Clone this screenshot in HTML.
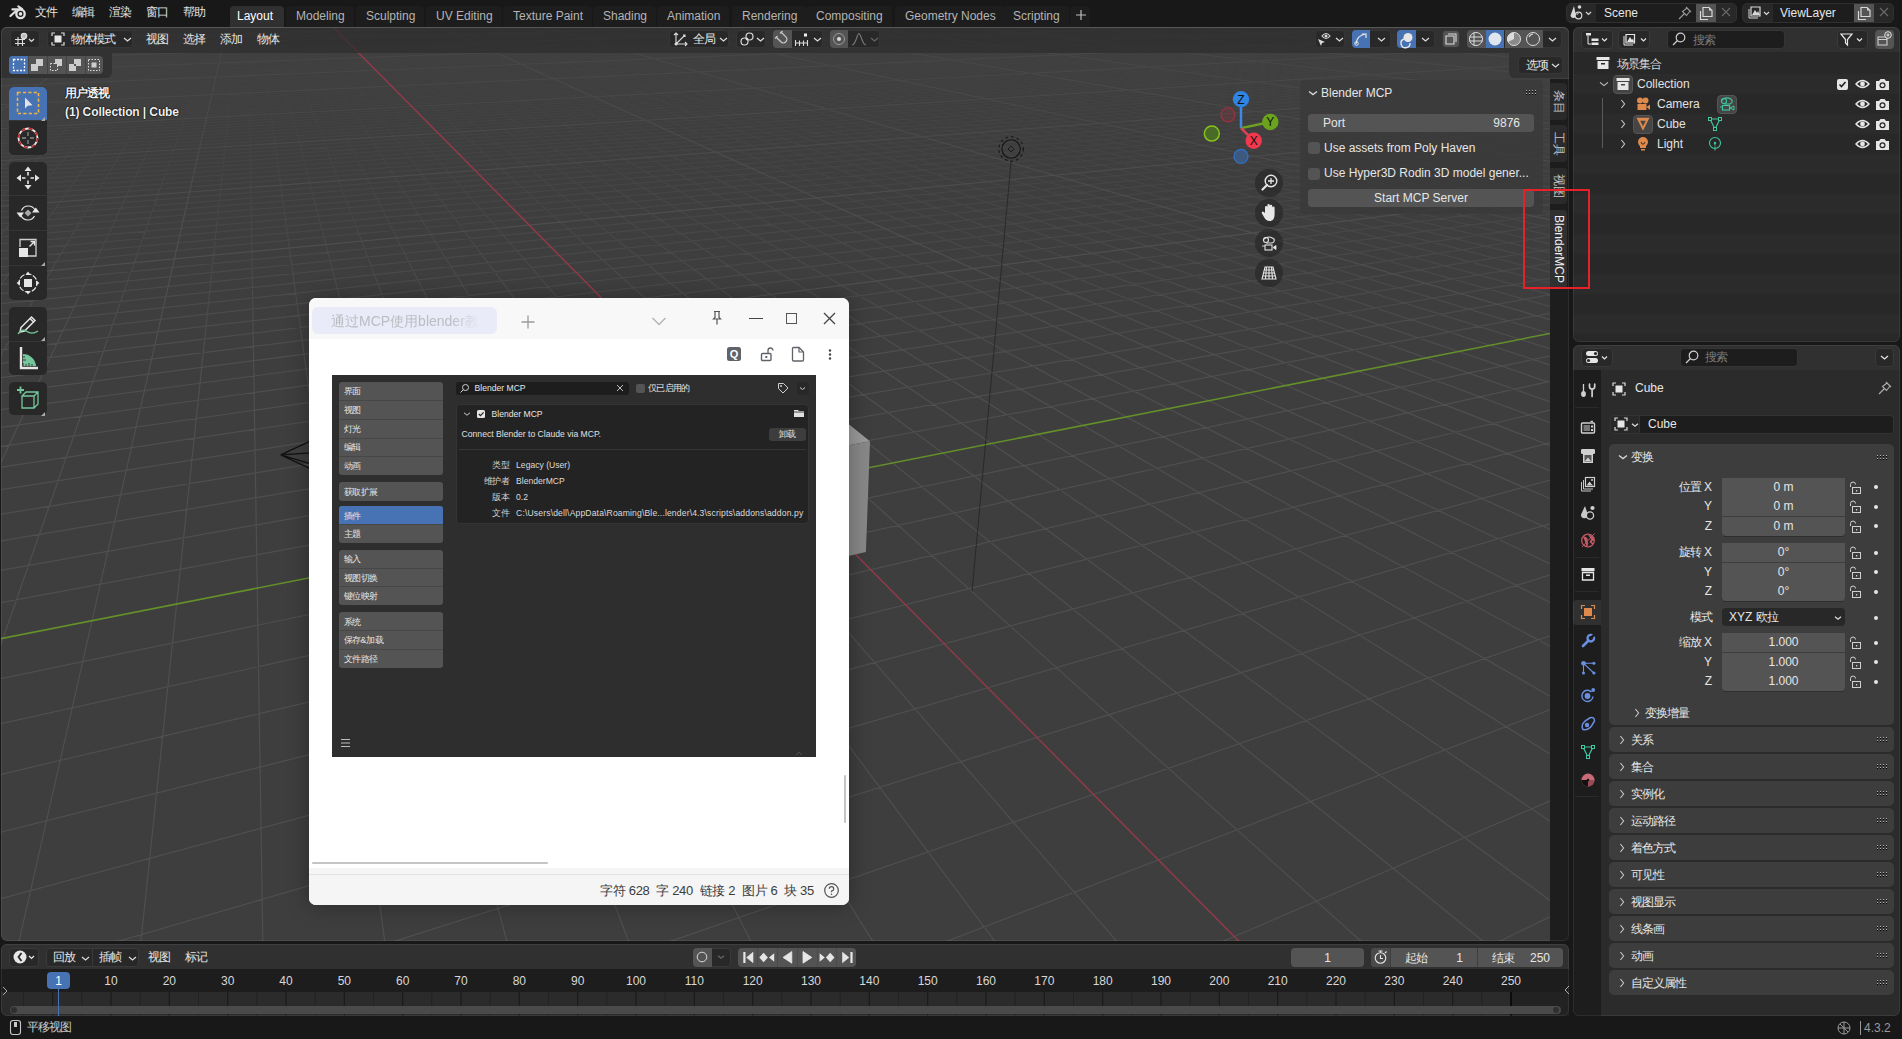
<!DOCTYPE html><html><head><meta charset="utf-8"><style>*{box-sizing:border-box}
body{margin:0;width:1902px;height:1039px;background:#181818;overflow:hidden;position:relative;font-family:"Liberation Sans",sans-serif;font-size:12px;color:#e6e6e6}
.a{position:absolute}
.t{white-space:pre}
svg{overflow:visible}
</style></head><body><svg class="a" style="left:9px;top:5px;" width="18" height="16" viewBox="0 0 18 16"><circle cx="11.5" cy="8.9" r="4.2" fill="none" stroke="#e2e2e2" stroke-width="2.3"/><circle cx="11.5" cy="8.9" r="1.8" fill="#e2e2e2"/><path d="M1.4 11L6.6 6.2M3.4 4.4L10.2 4.1M9.3 1.3L13.3 4" fill="none" stroke="#e2e2e2" stroke-width="2.1" stroke-linecap="round"/></svg><div class="a t" style="left:34.5px;top:6.34px;font-size:12px;line-height:12px;color:#e0e0e0;"><span style="letter-spacing:-1.00px">文件</span></div><div class="a t" style="left:71.5px;top:6.34px;font-size:12px;line-height:12px;color:#e0e0e0;"><span style="letter-spacing:-1.00px">编辑</span></div><div class="a t" style="left:108.5px;top:6.34px;font-size:12px;line-height:12px;color:#e0e0e0;"><span style="letter-spacing:-1.00px">渲染</span></div><div class="a t" style="left:145.5px;top:6.34px;font-size:12px;line-height:12px;color:#e0e0e0;"><span style="letter-spacing:-1.00px">窗口</span></div><div class="a t" style="left:182.5px;top:6.34px;font-size:12px;line-height:12px;color:#e0e0e0;"><span style="letter-spacing:-1.00px">帮助</span></div><div class="a" style="left:230px;top:6px;width:54px;height:21px;background:#303030;border-radius:4px 4px 0 0;"></div><div class="a" style="left:286px;top:6px;width:67.7px;height:21px;background:#1d1d1d;border-radius:4px 4px 0 0;"></div><div class="a" style="left:356px;top:6px;width:68.4px;height:21px;background:#1d1d1d;border-radius:4px 4px 0 0;"></div><div class="a" style="left:426px;top:6px;width:75.7px;height:21px;background:#1d1d1d;border-radius:4px 4px 0 0;"></div><div class="a" style="left:503px;top:6px;width:89px;height:21px;background:#1d1d1d;border-radius:4px 4px 0 0;"></div><div class="a" style="left:593px;top:6px;width:63px;height:21px;background:#1d1d1d;border-radius:4px 4px 0 0;"></div><div class="a" style="left:657px;top:6px;width:72.4px;height:21px;background:#1d1d1d;border-radius:4px 4px 0 0;"></div><div class="a" style="left:732px;top:6px;width:74.4px;height:21px;background:#1d1d1d;border-radius:4px 4px 0 0;"></div><div class="a" style="left:806px;top:6px;width:85.7px;height:21px;background:#1d1d1d;border-radius:4px 4px 0 0;"></div><div class="a" style="left:895px;top:6px;width:109.7px;height:21px;background:#1d1d1d;border-radius:4px 4px 0 0;"></div><div class="a" style="left:1003px;top:6px;width:65.7px;height:21px;background:#1d1d1d;border-radius:4px 4px 0 0;"></div><div class="a" style="left:1070px;top:6px;width:20px;height:21px;background:#1d1d1d;border-radius:4px 4px 0 0;"></div><div class="a t" style="left:237px;top:9.84px;font-size:12px;line-height:12px;color:#ffffff;">Layout</div><div class="a t" style="left:296px;top:9.84px;font-size:12px;line-height:12px;color:#b4b4b4;">Modeling</div><div class="a t" style="left:366px;top:9.84px;font-size:12px;line-height:12px;color:#b4b4b4;">Sculpting</div><div class="a t" style="left:436px;top:9.84px;font-size:12px;line-height:12px;color:#b4b4b4;">UV Editing</div><div class="a t" style="left:513px;top:9.84px;font-size:12px;line-height:12px;color:#b4b4b4;">Texture Paint</div><div class="a t" style="left:603px;top:9.84px;font-size:12px;line-height:12px;color:#b4b4b4;">Shading</div><div class="a t" style="left:667px;top:9.84px;font-size:12px;line-height:12px;color:#b4b4b4;">Animation</div><div class="a t" style="left:742px;top:9.84px;font-size:12px;line-height:12px;color:#b4b4b4;">Rendering</div><div class="a t" style="left:816px;top:9.84px;font-size:12px;line-height:12px;color:#b4b4b4;">Compositing</div><div class="a t" style="left:905px;top:9.84px;font-size:12px;line-height:12px;color:#b4b4b4;">Geometry Nodes</div><div class="a t" style="left:1013px;top:9.84px;font-size:12px;line-height:12px;color:#b4b4b4;">Scripting</div><svg class="a" style="left:1075px;top:9px;" width="12" height="12" viewBox="0 0 12 12"><path d="M6 1V11M1 6H11" stroke="#c0c0c0" stroke-width="1.2"/></svg><div class="a" style="left:1565.5px;top:3.3px;width:171px;height:19.4px;background:#282828;border-radius:5px;border:1px solid #303030;"></div><div class="a" style="left:1596.4px;top:4.3px;width:99.8px;height:17.4px;background:#1d1d1d;"></div><div class="a" style="left:1696.2px;top:4.3px;width:20px;height:17.4px;background:#545454;"></div><svg class="a" style="left:1569px;top:4px;" width="26" height="17" viewBox="0 0 26 17"><path d="M5 2L1.5 11.5A2.8 2.8 0 0 0 7 12Z" fill="#d8d8d8"/><circle cx="10.5" cy="3" r="1.8" fill="#d8d8d8"/><circle cx="9.5" cy="11.5" r="3.3" fill="#282828" stroke="#d8d8d8" stroke-width="1.2"/><path d="M8 11A1.5 1.5 0 0 1 9.5 9.5" fill="none" stroke="#d8d8d8" stroke-width="0.9"/><path d="M17 8L19.5 10.5L22 8" fill="none" stroke="#d8d8d8" stroke-width="1.2"/></svg><div class="a t" style="left:1604px;top:6.84px;font-size:12px;line-height:12px;color:#e6e6e6;">Scene</div><svg class="a" style="left:1677px;top:5px;" width="16" height="16" viewBox="0 0 16 16"><path d="M9 2L14 7M10 3L5.5 6.5L9.5 10.5L13 6M7.5 8.5L2 14" fill="none" stroke="#9a9a9a" stroke-width="1.1"/></svg><svg class="a" style="left:1698px;top:5px;" width="16" height="16" viewBox="0 0 16 16"><path d="M2.5 6V14.5H10" fill="none" stroke="#d8d8d8" stroke-width="1.2"/><path d="M5 2.5H11L14 5.5V11.5H5Z" fill="#545454" stroke="#d8d8d8" stroke-width="1.2"/><path d="M11 2.5V5.5H14Z" fill="#d8d8d8"/></svg><svg class="a" style="left:1719px;top:5px;" width="14" height="14" viewBox="0 0 14 14"><path d="M3 3L11 11M11 3L3 11" stroke="#6a6a6a" stroke-width="1.1"/></svg><div class="a" style="left:1742.4px;top:3.3px;width:151.6px;height:19.4px;background:#282828;border-radius:5px;border:1px solid #303030;"></div><div class="a" style="left:1773.3px;top:4.3px;width:80.3px;height:17.4px;background:#1d1d1d;"></div><div class="a" style="left:1853.6px;top:4.3px;width:20px;height:17.4px;background:#545454;"></div><svg class="a" style="left:1745px;top:4px;" width="28" height="17" viewBox="0 0 28 17"><path d="M4 5V14H13" fill="none" stroke="#d8d8d8" stroke-width="1"/><path d="M6 3V12H15V3Z" fill="none" stroke="#d8d8d8" stroke-width="1.2"/><path d="M7 11L10 6L12 9L13 7L15 11Z" fill="#d8d8d8"/><path d="M19 8L21.5 10.5L24 8" fill="none" stroke="#d8d8d8" stroke-width="1.2"/></svg><div class="a t" style="left:1780px;top:6.84px;font-size:12px;line-height:12px;color:#e6e6e6;">ViewLayer</div><svg class="a" style="left:1856px;top:5px;" width="16" height="16" viewBox="0 0 16 16"><path d="M2.5 6V14.5H10" fill="none" stroke="#d8d8d8" stroke-width="1.2"/><path d="M5 2.5H11L14 5.5V11.5H5Z" fill="#545454" stroke="#d8d8d8" stroke-width="1.2"/><path d="M11 2.5V5.5H14Z" fill="#d8d8d8"/></svg><svg class="a" style="left:1877px;top:5px;" width="14" height="14" viewBox="0 0 14 14"><path d="M3 3L11 11M11 3L3 11" stroke="#6a6a6a" stroke-width="1.1"/></svg><div class="a" style="left:1px;top:27px;width:1568px;height:914px;background:#3e3e3e;border-radius:6px;overflow:hidden;"><svg class="a" style="left:-1px;top:-27px" width="1570" height="945"><defs><linearGradient id="gm1" x1="0" y1="27" x2="0" y2="941" gradientUnits="userSpaceOnUse"><stop offset="0.000" stop-opacity="0.100" stop-color="#fff"/><stop offset="0.033" stop-opacity="0.135" stop-color="#fff"/><stop offset="0.066" stop-opacity="0.190" stop-color="#fff"/><stop offset="0.098" stop-opacity="0.251" stop-color="#fff"/><stop offset="0.131" stop-opacity="0.318" stop-color="#fff"/><stop offset="0.164" stop-opacity="0.389" stop-color="#fff"/><stop offset="0.197" stop-opacity="0.465" stop-color="#fff"/><stop offset="0.230" stop-opacity="0.545" stop-color="#fff"/><stop offset="0.263" stop-opacity="0.630" stop-color="#fff"/><stop offset="0.295" stop-opacity="0.718" stop-color="#fff"/><stop offset="0.328" stop-opacity="0.811" stop-color="#fff"/><stop offset="0.361" stop-opacity="0.907" stop-color="#fff"/><stop offset="0.394" stop-opacity="0.950" stop-color="#fff"/><stop offset="0.427" stop-opacity="0.950" stop-color="#fff"/><stop offset="0.460" stop-opacity="0.950" stop-color="#fff"/><stop offset="0.492" stop-opacity="0.950" stop-color="#fff"/><stop offset="0.525" stop-opacity="0.950" stop-color="#fff"/><stop offset="0.558" stop-opacity="0.950" stop-color="#fff"/><stop offset="0.591" stop-opacity="0.950" stop-color="#fff"/><stop offset="0.624" stop-opacity="0.950" stop-color="#fff"/><stop offset="0.656" stop-opacity="0.950" stop-color="#fff"/><stop offset="0.689" stop-opacity="0.950" stop-color="#fff"/><stop offset="0.722" stop-opacity="0.950" stop-color="#fff"/><stop offset="0.755" stop-opacity="0.950" stop-color="#fff"/><stop offset="0.788" stop-opacity="0.950" stop-color="#fff"/><stop offset="0.821" stop-opacity="0.950" stop-color="#fff"/><stop offset="0.853" stop-opacity="0.950" stop-color="#fff"/><stop offset="0.886" stop-opacity="0.950" stop-color="#fff"/><stop offset="0.919" stop-opacity="0.950" stop-color="#fff"/><stop offset="0.952" stop-opacity="0.950" stop-color="#fff"/><stop offset="0.985" stop-opacity="0.950" stop-color="#fff"/></linearGradient>
<linearGradient id="gm10" x1="0" y1="27" x2="0" y2="941" gradientUnits="userSpaceOnUse"><stop offset="0.000" stop-opacity="0.404" stop-color="#fff"/><stop offset="0.033" stop-opacity="0.462" stop-color="#fff"/><stop offset="0.066" stop-opacity="0.528" stop-color="#fff"/><stop offset="0.098" stop-opacity="0.602" stop-color="#fff"/><stop offset="0.131" stop-opacity="0.681" stop-color="#fff"/><stop offset="0.164" stop-opacity="0.767" stop-color="#fff"/><stop offset="0.197" stop-opacity="0.858" stop-color="#fff"/><stop offset="0.230" stop-opacity="0.950" stop-color="#fff"/><stop offset="0.263" stop-opacity="0.950" stop-color="#fff"/><stop offset="0.295" stop-opacity="0.950" stop-color="#fff"/><stop offset="0.328" stop-opacity="0.950" stop-color="#fff"/><stop offset="0.361" stop-opacity="0.950" stop-color="#fff"/><stop offset="0.394" stop-opacity="0.950" stop-color="#fff"/><stop offset="0.427" stop-opacity="0.950" stop-color="#fff"/><stop offset="0.460" stop-opacity="0.950" stop-color="#fff"/><stop offset="0.492" stop-opacity="0.950" stop-color="#fff"/><stop offset="0.525" stop-opacity="0.950" stop-color="#fff"/><stop offset="0.558" stop-opacity="0.950" stop-color="#fff"/><stop offset="0.591" stop-opacity="0.950" stop-color="#fff"/><stop offset="0.624" stop-opacity="0.950" stop-color="#fff"/><stop offset="0.656" stop-opacity="0.950" stop-color="#fff"/><stop offset="0.689" stop-opacity="0.950" stop-color="#fff"/><stop offset="0.722" stop-opacity="0.950" stop-color="#fff"/><stop offset="0.755" stop-opacity="0.950" stop-color="#fff"/><stop offset="0.788" stop-opacity="0.950" stop-color="#fff"/><stop offset="0.821" stop-opacity="0.950" stop-color="#fff"/><stop offset="0.853" stop-opacity="0.950" stop-color="#fff"/><stop offset="0.886" stop-opacity="0.950" stop-color="#fff"/><stop offset="0.919" stop-opacity="0.950" stop-color="#fff"/><stop offset="0.952" stop-opacity="0.950" stop-color="#fff"/><stop offset="0.985" stop-opacity="0.950" stop-color="#fff"/></linearGradient>
<mask id="m1" maskUnits="userSpaceOnUse" x="0" y="0" width="1570" height="945"><rect x="0" y="0" width="1570" height="945" fill="url(#gm1)"/></mask>
<mask id="m10" maskUnits="userSpaceOnUse" x="0" y="0" width="1570" height="945"><rect x="0" y="0" width="1570" height="945" fill="url(#gm10)"/></mask></defs>
<path d="M0.0 22.2L93.6 20.0M0.0 22.7L114.9 20.0M0.0 23.3L136.2 20.0M0.0 23.8L157.5 20.0M0.0 24.4L178.8 20.0M0.0 24.9L200.2 20.0M0.0 25.5L221.5 20.0M-0.0 26.0L242.9 20.0M-0.0 26.6L264.3 20.0M0.0 27.8L307.0 20.0M0.0 28.4L328.4 20.0M0.0 29.0L349.8 20.0M0.0 29.6L371.2 20.0M0.0 30.2L392.7 20.0M0.0 30.8L414.1 20.0M0.0 31.5L435.5 20.0M0.0 32.1L457.0 20.0M0.0 32.8L478.4 20.0M0.0 34.1L521.4 20.0M0.0 34.8L542.9 20.0M0.0 35.5L564.4 20.0M0.0 36.2L585.9 20.0M0.0 36.9L607.4 20.0M0.0 37.7L628.9 20.0M0.0 38.4L650.4 20.0M0.0 39.1L671.9 20.0M0.0 39.9L693.5 20.0M0.0 41.5L736.6 20.0M0.0 42.3L758.2 20.0M0.0 43.1L779.8 20.0M0.0 43.9L801.3 20.0M0.0 44.7L822.9 20.0M0.0 45.6L844.6 20.0M0.0 46.5L866.2 20.0M0.0 47.3L887.8 20.0M0.0 48.2L909.4 20.0M0.0 50.1L952.7 20.0M0.0 51.0L974.4 20.0M0.0 52.0L996.1 20.0M0.0 53.0L1017.7 20.0M0.0 53.9L1039.4 20.0M-0.0 55.0L1061.1 20.0M0.0 56.0L1082.8 20.0M-0.0 57.0L1104.5 20.0M0.0 58.1L1126.3 20.0M0.0 60.3L1169.7 20.0M0.0 61.4L1191.5 20.0M0.0 62.6L1213.2 20.0M0.0 63.7L1235.0 20.0M0.0 64.9L1256.8 20.0M0.0 66.1L1278.6 20.0M0.0 67.4L1300.4 20.0M0.0 68.6L1322.2 20.0M0.0 69.9L1344.0 20.0M0.0 72.6L1387.6 20.0M0.0 74.0L1409.5 20.0M0.0 75.3L1431.3 20.0M0.0 76.8L1453.2 20.0M0.0 78.2L1475.0 20.0M0.0 79.7L1496.9 20.0M0.0 81.3L1518.8 20.0M0.0 82.8L1540.7 20.0M0.0 84.4L1558.8 20.2M0.0 87.7L1570.0 21.5M0.0 89.4L1570.0 22.5M0.0 91.1L1570.0 23.5M0.0 92.9L1570.0 24.5M0.0 94.8L1570.0 25.5M0.0 96.6L1570.0 26.5M0.0 98.5L1570.0 27.6M0.0 100.5L1570.0 28.7M0.0 102.5L1570.0 29.8M0.0 106.7L1570.0 32.2M0.0 108.9L1570.0 33.4M0.0 111.1L1570.0 34.6M0.0 113.4L1570.0 35.9M0.0 115.8L1570.0 37.2M0.0 118.2L1570.0 38.6M0.0 120.7L1570.0 40.0M0.0 123.2L1570.0 41.4M0.0 125.9L1570.0 42.9M0.0 131.4L1570.0 45.9M0.0 134.2L1570.0 47.5M0.0 137.2L1570.0 49.2M0.0 140.3L1570.0 50.9M0.0 143.4L1570.0 52.7M0.0 146.7L1570.0 54.5M0.0 150.0L1570.0 56.4M0.0 153.5L1570.0 58.3M0.0 157.1L1570.0 60.3M0.0 164.6L1570.0 64.5M0.0 168.6L1570.0 66.7M0.0 172.7L1570.0 69.0M0.0 177.0L1570.0 71.4M0.0 181.4L1570.0 73.9M0.0 186.0L1570.0 76.5M0.0 190.8L1570.0 79.1M0.0 195.7L1570.0 81.9M0.0 200.9L1570.0 84.8M0.0 211.9L1570.0 90.9M0.0 217.7L1570.0 94.2M0.0 223.8L1570.0 97.6M0.0 230.2L1570.0 101.2M0.0 236.9L1570.0 104.9M0.0 243.8L1570.0 108.8M0.0 251.2L1570.0 112.9M0.0 258.9L1570.0 117.2M0.0 266.9L1570.0 121.7M0.0 284.4L1570.0 131.4M0.0 293.8L1570.0 136.7M0.0 303.8L1570.0 142.3M-0.0 314.3L1570.0 148.2M0.0 325.5L1570.0 154.4M0.0 337.4L1570.0 161.1M0.0 350.0L1570.0 168.1M0.0 363.5L1570.0 175.7M0.0 377.8L1570.0 183.7M0.0 409.7L1570.0 201.5M0.0 427.5L1570.0 211.4M0.0 446.6L1570.0 222.1M0.0 467.3L1570.0 233.7M0.0 489.8L1570.0 246.3M0.0 514.3L1570.0 260.0M0.0 541.1L1570.0 274.9M0.0 570.5L1570.0 291.3M0.0 602.9L1570.0 309.5M0.0 678.9L1570.0 351.9M0.0 723.8L1570.0 377.0M0.0 774.6L1570.0 405.4M0.0 832.4L1570.0 437.7M0.0 898.8L1570.0 474.8M105.7 945.0L1570.0 517.9M382.7 945.0L1570.0 568.5M659.9 945.0L1570.0 628.8M937.2 945.0L1570.0 701.9M1492.0 945.0L1570.0 907.0M0.9 21.7L0.0 22.0M11.5 21.4L0.0 25.4M22.0 21.2L0.0 29.1M42.9 20.7L0.0 37.6M53.3 20.4L0.0 42.5M63.5 20.2L0.0 47.9M73.7 20.0L0.0 53.9M83.4 20.0L0.0 60.6M93.1 20.0L0.0 68.2M102.7 20.0L0.0 76.8M112.4 20.0L0.0 86.6M122.1 20.0L-0.0 98.0M141.5 20.0L0.0 127.0M151.2 20.0L0.0 145.9M160.9 20.0L0.0 169.1M170.6 20.0L0.0 198.1M180.3 20.0L0.0 235.6M190.0 20.0L0.0 285.9M199.7 20.0L0.0 356.8M209.4 20.0L0.0 464.4M219.1 20.0L0.0 647.0M238.5 20.0L140.5 945.0M248.2 20.0L262.9 945.0M258.0 20.0L385.3 945.0M267.7 20.0L507.7 945.0M277.4 20.0L630.1 945.0M287.1 20.0L752.6 945.0M296.8 20.0L875.1 945.0M306.5 20.0L997.6 945.0M316.3 20.0L1120.1 945.0M335.7 20.0L1365.2 945.0M345.5 20.0L1487.8 945.0M355.2 20.0L1570.0 915.2M364.9 20.0L1570.0 834.7M374.7 20.0L1570.0 766.5M384.4 20.0L1570.0 708.0M394.1 20.0L1570.0 657.2M403.9 20.0L1570.0 612.7M413.6 20.0L1570.0 573.4M433.1 20.0L1570.0 507.1M442.9 20.0L1570.0 478.9M452.6 20.0L1570.0 453.3M462.4 20.0L1570.0 430.1M472.1 20.0L1570.0 408.9M481.9 20.0L1570.0 389.4M491.6 20.0L1570.0 371.5M501.4 20.0L1570.0 355.0M511.2 20.0L1570.0 339.6M530.7 20.0L1570.0 312.1M540.4 20.0L1570.0 299.8M550.2 20.0L1570.0 288.2M560.0 20.0L1570.0 277.3M569.8 20.0L1570.0 267.1M579.5 20.0L1570.0 257.5M589.3 20.0L1570.0 248.5M599.1 20.0L1570.0 239.9M608.9 20.0L1570.0 231.8M628.4 20.0L1570.0 216.8M638.2 20.0L1570.0 209.9M648.0 20.0L1570.0 203.3M657.8 20.0L1570.0 197.1M667.6 20.0L1570.0 191.1M677.4 20.0L1570.0 185.4M687.2 20.0L1570.0 179.9M697.0 20.0L1570.0 174.7M706.8 20.0L1570.0 169.7M726.4 20.0L1570.0 160.3M736.2 20.0L1570.0 155.9M746.0 20.0L1570.0 151.7M755.8 20.0L1570.0 147.6M765.6 20.0L1570.0 143.7M775.4 20.0L1570.0 139.9M785.2 20.0L1570.0 136.3M795.0 20.0L1570.0 132.8M804.8 20.0L1570.0 129.4M824.5 20.0L1570.0 123.0M834.3 20.0L1570.0 119.9M844.1 20.0L1570.0 116.9M853.9 20.0L1570.0 114.1M863.8 20.0L1570.0 111.3M873.6 20.0L1570.0 108.6M883.4 20.0L1570.0 106.0M893.3 20.0L1570.0 103.5M903.1 20.0L1570.0 101.1M922.8 20.0L1570.0 96.4M932.6 20.0L1570.0 94.1M942.4 20.0L1570.0 92.0M952.3 20.0L1570.0 89.8M962.1 20.0L1570.0 87.8M972.0 20.0L1570.0 85.8M981.8 20.0L1570.0 83.8M991.7 20.0L1570.0 81.9M1001.5 20.0L1570.0 80.1M1021.2 20.0L1570.0 76.5M1031.1 20.0L1570.0 74.8M1041.0 20.0L1570.0 73.1M1050.8 20.0L1570.0 71.5M1060.7 20.0L1570.0 69.9M1070.6 20.0L1570.0 68.4M1080.4 20.0L1570.0 66.8M1090.3 20.0L1570.0 65.4M1100.2 20.0L1570.0 63.9M1119.9 20.0L1570.0 61.1M1129.8 20.0L1570.0 59.8M1139.7 20.0L1570.0 58.4M1149.5 20.0L1570.0 57.1M1159.4 20.0L1570.0 55.9M1169.3 20.0L1570.0 54.6M1179.2 20.0L1570.0 53.4M1189.1 20.0L1570.0 52.2M1199.0 20.0L1570.0 51.1M1218.8 20.0L1570.0 48.8M1228.7 20.0L1570.0 47.7M1238.6 20.0L1570.0 46.7M1248.5 20.0L1570.0 45.6M1258.4 20.0L1570.0 44.6M1268.3 20.0L1570.0 43.6M1278.2 20.0L1570.0 42.6M1288.1 20.0L1570.0 41.6M1298.0 20.0L1570.0 40.6M1317.8 20.0L1570.0 38.8M1327.7 20.0L1570.0 37.9M1337.6 20.0L1570.0 37.0M1347.5 20.0L1570.0 36.1M1357.5 20.0L1570.0 35.3M1367.4 20.0L1570.0 34.4M1377.3 20.0L1570.0 33.6M1387.2 20.0L1570.0 32.8M1397.2 20.0L1570.0 32.0M1417.0 20.0L1570.0 30.4M1426.9 20.0L1570.0 29.7M1436.9 20.0L1570.0 28.9M1446.8 20.0L1570.0 28.2M1456.8 20.0L1570.0 27.5M1466.7 20.0L1570.0 26.8M1476.6 20.0L1570.0 26.1M1486.6 20.0L1570.0 25.4M1496.5 20.0L1570.0 24.7M1516.4 20.0L1570.0 23.4M1526.4 20.0L1570.0 22.7M1536.3 20.0L1570.0 22.1M1546.3 20.0L1570.0 21.5M1556.2 20.0L1570.0 20.8" stroke="#505050" stroke-width="1.2" fill="none" mask="url(#m1)"/>
<path d="M0.0 21.7L72.3 20.0M0.0 27.2L285.6 20.0M0.0 33.4L499.9 20.0M0.0 40.7L715.0 20.0M-0.0 49.2L931.1 20.0M0.0 59.2L1148.0 20.0M0.0 71.2L1365.8 20.0M0.0 86.0L1567.7 20.7M0.0 104.6L1570.0 31.0M0.0 128.6L1570.0 44.4M0.0 160.8L1570.0 62.4M0.0 206.3L1570.0 87.8M0.0 275.4L1570.0 126.4M0.0 393.2L1570.0 192.3M1214.5 945.0L1570.0 792.3M32.5 20.9L0.0 33.2M131.8 20.0L0.0 111.3M228.8 20.0L18.2 945.0M423.4 20.0L1570.0 538.4M520.9 20.0L1570.0 325.4M618.6 20.0L1570.0 224.1M716.6 20.0L1570.0 164.9M814.6 20.0L1570.0 126.1M912.9 20.0L1570.0 98.7M1011.4 20.0L1570.0 78.3M1110.0 20.0L1570.0 62.5M1208.9 20.0L1570.0 49.9M1307.9 20.0L1570.0 39.7M1407.1 20.0L1570.0 31.2M1506.5 20.0L1570.0 24.0" stroke="#505050" stroke-width="1.2" fill="none" mask="url(#m10)"/>
<path d="M326.0 20.0L1242.7 945.0" stroke="#8e3a49" stroke-width="1.55" fill="none"/>
<path d="M0.0 638.8L1570.0 329.5" stroke="#64902a" stroke-width="1.55" fill="none"/><polygon points="751.7,463.5 870.0,441.3 815.6,397.6 705.9,416.0" fill="#9a9a9a" stroke="none"/><polygon points="751.7,463.5 753.5,577.8 709.7,522.6 705.9,416.0" fill="#7e7e7e" stroke="none"/><polygon points="751.7,463.5 870.0,441.3 865.9,552.1 753.5,577.8" fill="#888888" stroke="none"/><path d="M1011.1 161.0L972.1 591.4" stroke="#202020" stroke-width="0.9" fill="none" opacity="0.75"/><circle cx="1011.1" cy="149.0" r="9.2" fill="none" stroke="#151515" stroke-width="1.1"/><circle cx="1011.1" cy="149.0" r="12.2" fill="none" stroke="#151515" stroke-width="1.1" stroke-dasharray="2.6 3.1"/><path d="M1011.1 146.0L1014.1 149.0L1011.1 152.0L1008.1 149.0Z" fill="none" stroke="#151515" stroke-width="0.9"/><path d="M280.7 454.9L310.7 440.9M280.7 454.9L310.7 452.9M280.7 454.9L310.7 463.9M280.7 454.9L310.7 468.9" stroke="#111" stroke-width="1.2" fill="none"/></svg></div><div class="a" style="left:1px;top:27px;width:1568px;height:26px;background:rgba(44,44,44,0.72);border-radius:6px 6px 0 0;border-top:1px solid #4a4a4a;"></div><div class="a" style="left:10px;top:30px;width:30px;height:18px;background:#282828;border-radius:4px;border:1px solid #363636;"></div><svg class="a" style="left:13px;top:31px;" width="26" height="16" viewBox="0 0 26 16"><path d="M2 8.5H12M2 12.5H12M5 6V15M9.5 6V15" stroke="#dcdcdc" stroke-width="1.1"/><circle cx="11" cy="5" r="3.3" fill="#dcdcdc"/><circle cx="11" cy="5" r="2" fill="#bbb"/><path d="M16 8L18.5 10.5L21 8" fill="none" stroke="#dcdcdc" stroke-width="1.2"/></svg><div class="a" style="left:47px;top:30px;width:86px;height:18px;background:#282828;border-radius:4px;border:1px solid #363636;"></div><svg class="a" style="left:50px;top:31px;" width="16" height="16" viewBox="0 0 16 16"><path d="M2 5V2H5M11 2H14V5M14 11V14H11M5 14H2V11" fill="none" stroke="#dcdcdc" stroke-width="1.2"/><rect x="4.5" y="4.5" width="7" height="7" fill="#e6e6e6"/></svg><div class="a t" style="left:71px;top:32.84px;font-size:12px;line-height:12px;color:#e6e6e6;"><span style="letter-spacing:-1.00px">物体模式</span></div><svg class="a" style="left:122.5px;top:35px;" width="9" height="9" viewBox="0 0 9 9"><path d="M1 3.1L4.5 5.8999999999999995L8 3.1" fill="none" stroke="#dcdcdc" stroke-width="1.3"/></svg><div class="a t" style="left:146px;top:32.84px;font-size:12px;line-height:12px;color:#e6e6e6;"><span style="letter-spacing:-1.00px">视图</span></div><div class="a t" style="left:183px;top:32.84px;font-size:12px;line-height:12px;color:#e6e6e6;"><span style="letter-spacing:-1.00px">选择</span></div><div class="a t" style="left:220px;top:32.84px;font-size:12px;line-height:12px;color:#e6e6e6;"><span style="letter-spacing:-1.00px">添加</span></div><div class="a t" style="left:257px;top:32.84px;font-size:12px;line-height:12px;color:#e6e6e6;"><span style="letter-spacing:-1.00px">物体</span></div><div class="a" style="left:669px;top:30px;width:60px;height:18px;background:#282828;border-radius:4px;border:1px solid #363636;"></div><svg class="a" style="left:673px;top:31px;" width="20" height="16" viewBox="0 0 20 16"><path d="M3 2V13H14M3 13L12 4M10 4H12V6M12 11L14 13L12 15M1 4L3 2L5 4" fill="none" stroke="#dcdcdc" stroke-width="1.1"/><circle cx="3" cy="13" r="1.5" fill="#dcdcdc"/></svg><div class="a t" style="left:693px;top:32.84px;font-size:12px;line-height:12px;color:#e6e6e6;"><span style="letter-spacing:-1.00px">全局</span></div><svg class="a" style="left:718.5px;top:35px;" width="9" height="9" viewBox="0 0 9 9"><path d="M1 3.1L4.5 5.8999999999999995L8 3.1" fill="none" stroke="#dcdcdc" stroke-width="1.3"/></svg><div class="a" style="left:736px;top:30px;width:30px;height:18px;background:#282828;border-radius:4px;border:1px solid #363636;"></div><svg class="a" style="left:739px;top:31px;" width="16" height="16" viewBox="0 0 16 16"><circle cx="5.5" cy="10.5" r="3.5" fill="none" stroke="#dcdcdc" stroke-width="1.2"/><circle cx="10.5" cy="5.5" r="3.5" fill="none" stroke="#dcdcdc" stroke-width="1.2"/><circle cx="8" cy="8" r="1.3" fill="#dcdcdc"/></svg><svg class="a" style="left:755.5px;top:35px;" width="9" height="9" viewBox="0 0 9 9"><path d="M1 3.1L4.5 5.8999999999999995L8 3.1" fill="none" stroke="#dcdcdc" stroke-width="1.3"/></svg><div class="a" style="left:773px;top:30px;width:50px;height:18px;background:#282828;border-radius:4px;border:1px solid #363636;"></div><div class="a" style="left:773px;top:30px;width:19px;height:18px;background:#545454;border-radius:4px 0 0 4px;"></div><svg class="a" style="left:775px;top:31px;" width="16" height="16" viewBox="0 0 16 16"><g transform="rotate(-45 8 8)"><path d="M4.5 2V8.5A3.5 3.5 0 0 0 11.5 8.5V2" fill="none" stroke="#c8c8c8" stroke-width="1.3"/><path d="M2.8 2H6.2M9.8 2H13.2" stroke="#c8c8c8" stroke-width="1.3"/></g></svg><svg class="a" style="left:794px;top:31px;" width="20" height="16" viewBox="0 0 20 16"><path d="M1.5 9V15M1.5 12H13.5M5.5 9.5V15M9.5 9.5V15M13.5 9V15" stroke="#dcdcdc" stroke-width="1.1"/><rect x="10" y="2.5" width="3" height="3" fill="#eeeeee"/></svg><svg class="a" style="left:812.5px;top:35px;" width="9" height="9" viewBox="0 0 9 9"><path d="M1 3.1L4.5 5.8999999999999995L8 3.1" fill="none" stroke="#dcdcdc" stroke-width="1.3"/></svg><div class="a" style="left:830px;top:30px;width:50px;height:18px;background:#282828;border-radius:4px;border:1px solid #363636;"></div><div class="a" style="left:830px;top:30px;width:18px;height:18px;background:#545454;border-radius:4px 0 0 4px;"></div><svg class="a" style="left:831px;top:31px;" width="16" height="16" viewBox="0 0 16 16"><circle cx="8" cy="8" r="5.5" fill="none" stroke="#9a9a9a" stroke-width="1"/><circle cx="8" cy="8" r="2" fill="#dcdcdc"/></svg><svg class="a" style="left:851px;top:31px;" width="16" height="16" viewBox="0 0 16 16"><path d="M1 14C5 14 6 2.5 8 2.5C10 2.5 11 14 15 14" fill="none" stroke="#7a7a7a" stroke-width="1.1"/></svg><svg class="a" style="left:869.5px;top:35px;" width="9" height="9" viewBox="0 0 9 9"><path d="M1 3.1L4.5 5.8999999999999995L8 3.1" fill="none" stroke="#666" stroke-width="1.3"/></svg><div class="a" style="left:1315px;top:30px;width:30px;height:18px;background:#282828;border-radius:4px;border:1px solid #363636;"></div><svg class="a" style="left:1316px;top:31px;" width="20" height="16" viewBox="0 0 20 16"><path d="M2 8L9 11L6 12L5 15Z" fill="#dcdcdc"/><path d="M6 5Q10 0 14 5Q10 10 6 5Z" fill="none" stroke="#dcdcdc" stroke-width="1.2"/><circle cx="10" cy="5" r="1.5" fill="#dcdcdc"/></svg><svg class="a" style="left:1334.5px;top:35px;" width="9" height="9" viewBox="0 0 9 9"><path d="M1 3.1L4.5 5.8999999999999995L8 3.1" fill="none" stroke="#dcdcdc" stroke-width="1.3"/></svg><div class="a" style="left:1352px;top:30px;width:39px;height:18px;background:#282828;border-radius:4px;border:1px solid #363636;"></div><div class="a" style="left:1352px;top:30px;width:18px;height:18px;background:#4772b3;border-radius:4px 0 0 4px;"></div><svg class="a" style="left:1353px;top:31px;" width="16" height="16" viewBox="0 0 16 16"><path d="M3 13Q4 4 13 3M9 3H13V7" fill="none" stroke="#e6e6e6" stroke-width="1.2"/><circle cx="3.5" cy="12.5" r="1.8" fill="none" stroke="#e6e6e6" stroke-width="1"/></svg><svg class="a" style="left:1376.5px;top:35px;" width="9" height="9" viewBox="0 0 9 9"><path d="M1 3.1L4.5 5.8999999999999995L8 3.1" fill="none" stroke="#dcdcdc" stroke-width="1.3"/></svg><div class="a" style="left:1397px;top:30px;width:38px;height:18px;background:#282828;border-radius:4px;border:1px solid #363636;"></div><div class="a" style="left:1397px;top:30px;width:19px;height:18px;background:#4772b3;border-radius:4px 0 0 4px;"></div><svg class="a" style="left:1399px;top:31px;" width="16" height="16" viewBox="0 0 16 16"><circle cx="9" cy="6.5" r="4.5" fill="#e6e6e6"/><path d="M5 8A4.5 4.5 0 1 0 11 12" fill="none" stroke="#e6e6e6" stroke-width="1.4"/></svg><svg class="a" style="left:1420.5px;top:35px;" width="9" height="9" viewBox="0 0 9 9"><path d="M1 3.1L4.5 5.8999999999999995L8 3.1" fill="none" stroke="#dcdcdc" stroke-width="1.3"/></svg><div class="a" style="left:1442px;top:30px;width:18px;height:18px;background:#545454;border-radius:4px;border:1px solid #363636;"></div><svg class="a" style="left:1443px;top:31px;" width="16" height="16" viewBox="0 0 16 16"><path d="M5 3H13V11M3 5H11V13H3Z" fill="none" stroke="#dcdcdc" stroke-width="1.1"/></svg><div class="a" style="left:1467px;top:30px;width:95px;height:18px;background:#282828;border-radius:4px;border:1px solid #363636;"></div><div class="a" style="left:1467px;top:30px;width:19px;height:18px;background:#545454;border-radius:4px 0 0 4px;"></div><div class="a" style="left:1486px;top:30px;width:18px;height:18px;background:#4772b3;"></div><div class="a" style="left:1505px;top:30px;width:19px;height:18px;background:#545454;"></div><div class="a" style="left:1524px;top:30px;width:19px;height:18px;background:#545454;"></div><svg class="a" style="left:1468px;top:31px;" width="16" height="16" viewBox="0 0 16 16"><circle cx="8" cy="8" r="6.5" fill="none" stroke="#dcdcdc" stroke-width="1"/><path d="M1.5 6H14.5M1.5 10H14.5M6 1.5V14.5" stroke="#dcdcdc" stroke-width="1" fill="none"/></svg><svg class="a" style="left:1487px;top:31px;" width="16" height="16" viewBox="0 0 16 16"><circle cx="8" cy="8" r="6.5" fill="#dfe6f0"/></svg><svg class="a" style="left:1506px;top:31px;" width="16" height="16" viewBox="0 0 16 16"><circle cx="8" cy="8" r="6.5" fill="#8a8a8a" stroke="#dcdcdc" stroke-width="1"/><path d="M8 1.5A6.5 6.5 0 0 0 2 11L8 8Z" fill="#dcdcdc"/></svg><svg class="a" style="left:1525px;top:31px;" width="16" height="16" viewBox="0 0 16 16"><circle cx="8" cy="8" r="6.5" fill="none" stroke="#dcdcdc" stroke-width="1"/><path d="M4 6Q5 3.5 8 3" fill="none" stroke="#dcdcdc" stroke-width="1.1"/></svg><svg class="a" style="left:1547.5px;top:35px;" width="9" height="9" viewBox="0 0 9 9"><path d="M1 3.1L4.5 5.8999999999999995L8 3.1" fill="none" stroke="#dcdcdc" stroke-width="1.3"/></svg><div class="a" style="left:1px;top:53px;width:111px;height:25px;background:rgba(44,44,44,0.72);border-radius:0 0 6px 0;"></div><div class="a" style="left:9px;top:56px;width:94px;height:18px;background:#545454;border-radius:4px;"></div><div class="a" style="left:9px;top:56px;width:19px;height:18px;background:#4772b3;border-radius:4px 0 0 4px;"></div><div class="a" style="left:27.5px;top:56px;width:1px;height:18px;background:#444;"></div><div class="a" style="left:46.5px;top:56px;width:1px;height:18px;background:#444;"></div><div class="a" style="left:65.5px;top:56px;width:1px;height:18px;background:#444;"></div><div class="a" style="left:84.5px;top:56px;width:1px;height:18px;background:#444;"></div><svg class="a" style="left:11px;top:57px;" width="16" height="16" viewBox="0 0 16 16"><rect x="2.5" y="2.5" width="11" height="11" fill="none" stroke="#fff" stroke-width="1.3" stroke-dasharray="2 1.5"/></svg><svg class="a" style="left:29px;top:57px;" width="16" height="16" viewBox="0 0 16 16"><path d="M2 7H7V2H14V9H9V14H2Z" fill="#cdcdcd"/></svg><svg class="a" style="left:48px;top:57px;" width="16" height="16" viewBox="0 0 16 16"><rect x="2.5" y="6.5" width="7" height="7" fill="none" stroke="#e0e0e0" stroke-dasharray="1.5 1.5"/><path d="M7 2H14V9H9V7H7Z" fill="#cdcdcd"/></svg><svg class="a" style="left:67px;top:57px;" width="16" height="16" viewBox="0 0 16 16"><path d="M2 7H7V2H14V9H9V14H2ZM7 7V9H9V7Z" fill="#cdcdcd" fill-rule="evenodd"/></svg><svg class="a" style="left:86px;top:57px;" width="16" height="16" viewBox="0 0 16 16"><rect x="2.5" y="2.5" width="11" height="11" fill="none" stroke="#e0e0e0" stroke-dasharray="1.5 1.5"/><rect x="5.5" y="5.5" width="5" height="5" fill="#cdcdcd"/></svg><div class="a" style="left:9px;top:87px;width:38px;height:68px;background:#282828;border-radius:5px;"></div><div class="a" style="left:9px;top:120px;width:38px;height:1px;background:#353535;"></div><div class="a" style="left:9px;top:162px;width:38px;height:138px;background:#282828;border-radius:5px;"></div><div class="a" style="left:9px;top:195px;width:38px;height:1px;background:#353535;"></div><div class="a" style="left:9px;top:230px;width:38px;height:1px;background:#353535;"></div><div class="a" style="left:9px;top:265px;width:38px;height:1px;background:#353535;"></div><div class="a" style="left:9px;top:307px;width:38px;height:68px;background:#282828;border-radius:5px;"></div><div class="a" style="left:9px;top:341px;width:38px;height:1px;background:#353535;"></div><div class="a" style="left:9px;top:382px;width:38px;height:33px;background:#282828;border-radius:5px;"></div><div class="a" style="left:9px;top:87px;width:38px;height:33px;background:#4772b3;border-radius:5px 5px 0 0;"></div><svg class="a" style="left:16px;top:91px;" width="24" height="24" viewBox="0 0 24 24"><rect x="1.5" y="1.5" width="21" height="21" fill="none" stroke="#f2b443" stroke-width="1.6" stroke-dasharray="3.2 2.2"/><path d="M9 6.5V17.5L11.8 14.8L16.5 14.2Z" fill="#dfe4ea"/></svg><svg class="a" style="left:16px;top:126px;" width="24" height="24" viewBox="0 0 24 24"><circle cx="12" cy="12" r="9.5" fill="none" stroke="#eeeeee" stroke-width="1.8"/><circle cx="12" cy="12" r="9.5" fill="none" stroke="#b52b2b" stroke-width="1.8" stroke-dasharray="4.2 3.3"/><path d="M12 6V10M12 14V18M6 12H10M14 12H18" stroke="#8c8c8c" stroke-width="1.3"/></svg><svg class="a" style="left:16px;top:166px;" width="24" height="24" viewBox="0 0 24 24"><path d="M12 0.5L8.5 5H15.5ZM12 23.5L8.5 19H15.5ZM0.5 12L5 8.5V15.5ZM23.5 12L19 8.5V15.5Z" fill="#e6e6e6"/><path d="M12 6V9.5M12 14.5V18M6 12H9.5M14.5 12H18" stroke="#e6e6e6" stroke-width="1.6"/></svg><svg class="a" style="left:16px;top:201px;" width="24" height="24" viewBox="0 0 24 24"><path d="M5.5 9.5A7.5 7.5 0 0 1 19 9M18.5 15A7.5 7.5 0 0 1 5 14.5" fill="none" stroke="#e6e6e6" stroke-width="1.2"/><path d="M0.5 11.5H8L4.3 16.5ZM16 11.5H23.5L19.8 6.5Z" fill="#e6e6e6"/><path d="M12 8.5L15.5 12L12 15.5L8.5 12Z" fill="#a8a8a8"/></svg><svg class="a" style="left:16px;top:236px;" width="24" height="24" viewBox="0 0 24 24"><path d="M4 11V3.5H20V20H12" fill="none" stroke="#cfcfcf" stroke-width="1.3"/><rect x="3" y="12" width="9" height="9" fill="#e6e6e6"/><path d="M13.5 10.5L18.5 5.5M14.5 5.5H18.5V9.5" fill="none" stroke="#e6e6e6" stroke-width="1.4"/></svg><svg class="a" style="left:16px;top:271px;" width="24" height="24" viewBox="0 0 24 24"><circle cx="12" cy="12" r="9" fill="none" stroke="#e6e6e6" stroke-width="1.2" stroke-dasharray="5.5 1.6" stroke-dashoffset="2.5"/><rect x="8" y="8" width="8" height="8" fill="#e6e6e6"/><path d="M12 0.5L9.5 4H14.5ZM12 23.5L9.5 20H14.5ZM0.5 12L4 9.5V14.5ZM23.5 12L20 9.5V14.5Z" fill="#e6e6e6"/></svg><svg class="a" style="left:16px;top:312px;" width="24" height="24" viewBox="0 0 24 24"><path d="M5 15.5L15.5 5L19 8.5L8.5 19L4 20Z M14 6.5L17.5 10" fill="none" stroke="#e6e6e6" stroke-width="1.5"/><path d="M2 22Q6 16 11 19.5T22 19" fill="none" stroke="#74c79b" stroke-width="1.4"/></svg><svg class="a" style="left:16px;top:346px;" width="24" height="24" viewBox="0 0 24 24"><path d="M5 1V22H22" fill="none" stroke="#e6e6e6" stroke-width="2.4"/><path d="M7 8A13 13 0 0 1 20 20H7Z" fill="#74c79b"/><path d="M7 20V17M10 20V18M13 20V17M16 20V18M7 11H9M7 14H10" stroke="#2a2a2a" stroke-width="0.9"/></svg><svg class="a" style="left:16px;top:386px;" width="24" height="24" viewBox="0 0 24 24"><path d="M6 10L10 6H22V18L18 22H6ZM6 10H18V22M18 10L22 6" fill="none" stroke="#74c79b" stroke-width="1.3"/><path d="M4.5 0.5V7.5M1 4H8" stroke="#74c79b" stroke-width="1.8"/></svg><svg class="a" style="left:41px;top:117px;" width="4" height="4" viewBox="0 0 4 4"><path d="M4 0V4H0Z" fill="#aaa"/></svg><svg class="a" style="left:41px;top:262px;" width="4" height="4" viewBox="0 0 4 4"><path d="M4 0V4H0Z" fill="#aaa"/></svg><svg class="a" style="left:41px;top:337px;" width="4" height="4" viewBox="0 0 4 4"><path d="M4 0V4H0Z" fill="#aaa"/></svg><svg class="a" style="left:41px;top:412px;" width="4" height="4" viewBox="0 0 4 4"><path d="M4 0V4H0Z" fill="#aaa"/></svg><div class="a t" style="left:65px;top:86.84px;font-size:12px;line-height:12px;color:#f0f0f0;text-shadow:0 0 1.5px #000,0 0 1px #000;font-weight:bold;"><span style="letter-spacing:-1.00px">用户透视</span></div><div class="a t" style="left:65px;top:105.84px;font-size:12px;line-height:12px;color:#f0f0f0;text-shadow:0 0 1.5px #000,0 0 1px #000;font-weight:bold;letter-spacing:-0.1px;">(1) Collection | Cube</div><svg class="a" style="left:0;top:0" width="1" height="1"><path d="M1241 128.1L1241 99.2" stroke="#3d8ae6" stroke-width="2.5"/><path d="M1241 128.1L1270.3 122" stroke="#6da31e" stroke-width="2.5"/><path d="M1241 128.1L1253.7 140.7" stroke="#e0405a" stroke-width="2.5"/>
<circle cx="1228" cy="114.8" r="7" fill="rgba(150,50,60,0.25)" stroke="#9c3040" stroke-width="1.3"/>
<circle cx="1211.8" cy="133.6" r="7.5" fill="#4a6a28" stroke="#86c31e" stroke-width="1.5"/>
<circle cx="1241" cy="156.4" r="7" fill="#3d5a7e" stroke="#2f70c8" stroke-width="1.3"/>
<circle cx="1241" cy="99.2" r="8.2" fill="#2f83e3"/><circle cx="1270.3" cy="122" r="8.2" fill="#6ba31c"/><circle cx="1253.7" cy="140.7" r="8.2" fill="#f0384e"/>
<text x="1241" y="103.6" font-size="12" font-family="Liberation Sans" text-anchor="middle" fill="#111">Z</text>
<text x="1270.3" y="126.4" font-size="12" font-family="Liberation Sans" text-anchor="middle" fill="#111">Y</text>
<text x="1253.7" y="145.1" font-size="12" font-family="Liberation Sans" text-anchor="middle" fill="#111">X</text></svg><div class="a" style="left:1255px;top:168.5px;width:28px;height:28px;background:rgba(32,32,32,0.55);border-radius:14px;"></div><div class="a" style="left:1255px;top:198.5px;width:28px;height:28px;background:rgba(32,32,32,0.55);border-radius:14px;"></div><div class="a" style="left:1255px;top:228.8px;width:28px;height:28px;background:rgba(32,32,32,0.55);border-radius:14px;"></div><div class="a" style="left:1255px;top:259.1px;width:28px;height:28px;background:rgba(32,32,32,0.55);border-radius:14px;"></div><svg class="a" style="left:1259px;top:172px;" width="20" height="20" viewBox="0 0 20 20"><circle cx="12" cy="9" r="5.8" fill="none" stroke="#e6e6e6" stroke-width="1.4"/><path d="M12 6V12M9 9H15" stroke="#e6e6e6" stroke-width="1.3"/><path d="M8 13L3.5 17.5" stroke="#e6e6e6" stroke-width="2.2" stroke-linecap="round"/></svg><svg class="a" style="left:1260px;top:203px;" width="19" height="19" viewBox="0 0 19 19"><path d="M5 10V4.2A1.2 1.2 0 0 1 7.4 4.2V9V2.2A1.2 1.2 0 0 1 9.8 2.2V9V3A1.2 1.2 0 0 1 12.2 3V9V4.8A1.2 1.2 0 0 1 14.6 4.8V11.5Q14.6 18 9.5 18Q6 18 4 14L1.8 10.2A1.2 1.2 0 0 1 3.8 9Z" fill="#e6e6e6"/></svg><svg class="a" style="left:1261px;top:235px;" width="16" height="16" viewBox="0 0 16 16"><circle cx="5" cy="5" r="2.5" fill="none" stroke="#e6e6e6" stroke-width="1.1"/><path d="M3 4Q8 0 13 4Q14 8 10 8H5" fill="none" stroke="#e6e6e6" stroke-width="1.1"/><rect x="4" y="10" width="7" height="5" fill="none" stroke="#e6e6e6" stroke-width="1.1"/><path d="M12 12.5L15 10.5V14.5Z M1 11H4" fill="#e6e6e6" stroke="#e6e6e6" stroke-width="0.8"/></svg><svg class="a" style="left:1261px;top:265px;" width="16" height="16" viewBox="0 0 16 16"><path d="M4 2H12L15 14H1ZM8 2V14M2.5 8H13.5M5.5 2L4.5 14M10.5 2L11.5 14M1.8 11H14.2M3 5H13" fill="none" stroke="#e6e6e6" stroke-width="1.1"/></svg><div class="a" style="left:1509px;top:53px;width:60px;height:25px;background:rgba(44,44,44,0.72);border-radius:0 0 0 6px;"></div><div class="a" style="left:1518px;top:56px;width:45px;height:18px;background:#282828;border-radius:4px;border:1px solid #363636;"></div><div class="a t" style="left:1526px;top:58.84px;font-size:12px;line-height:12px;color:#e6e6e6;"><span style="letter-spacing:-1.00px">选项</span></div><svg class="a" style="left:1550.5px;top:61px;" width="9" height="9" viewBox="0 0 9 9"><path d="M1 3.1L4.5 5.8999999999999995L8 3.1" fill="none" stroke="#dcdcdc" stroke-width="1.3"/></svg><div class="a" style="left:1550px;top:79px;width:19px;height:862px;background:#1d1d1d;"></div><div class="a" style="left:1550px;top:83px;width:17px;height:37px;background:#2a2a2a;border-radius:0 4px 4px 0;"></div><div class="a t" style="left:1558.5px;top:101.5px;width:0;height:0"><div class="a t" style="left:0;top:0;transform:translate(-50%,-50%) rotate(90deg);font-size:12px;line-height:12px;color:#c8c8c8;white-space:nowrap">条目</div></div><div class="a" style="left:1550px;top:125px;width:17px;height:37px;background:#2a2a2a;border-radius:0 4px 4px 0;"></div><div class="a t" style="left:1558.5px;top:143.5px;width:0;height:0"><div class="a t" style="left:0;top:0;transform:translate(-50%,-50%) rotate(90deg);font-size:12px;line-height:12px;color:#c8c8c8;white-space:nowrap">工具</div></div><div class="a" style="left:1550px;top:167.5px;width:17px;height:36.5px;background:#2a2a2a;border-radius:0 4px 4px 0;"></div><div class="a t" style="left:1558.5px;top:185.75px;width:0;height:0"><div class="a t" style="left:0;top:0;transform:translate(-50%,-50%) rotate(90deg);font-size:12px;line-height:12px;color:#c8c8c8;white-space:nowrap">视图</div></div><div class="a" style="left:1550px;top:209.5px;width:17px;height:79.1px;background:#303030;border-radius:0 4px 4px 0;"></div><div class="a t" style="left:1558.5px;top:249.05px;width:0;height:0"><div class="a t" style="left:0;top:0;transform:translate(-50%,-50%) rotate(90deg);font-size:12px;line-height:12px;color:#f0f0f0;white-space:nowrap">BlenderMCP</div></div><div class="a" style="left:1299.5px;top:80px;width:243px;height:133.5px;background:rgba(58,58,58,0.86);border-radius:5px;"></div><svg class="a" style="left:1308px;top:88px;" width="10" height="10" viewBox="0 0 10 10"><path d="M1 3.4L5.0 6.6L9 3.4" fill="none" stroke="#d8d8d8" stroke-width="1.3"/></svg><div class="a t" style="left:1321px;top:86.84px;font-size:12px;line-height:12px;color:#e6e6e6;">Blender MCP</div><svg class="a" style="left:1525px;top:88.5px;" width="12" height="7" viewBox="0 0 12 7"><rect x="1" y="1" width="1" height="1" fill="#b4b4b4"/><rect x="1" y="2" width="1" height="1" fill="#000"/><rect x="1" y="4" width="1" height="1" fill="#b4b4b4"/><rect x="1" y="5" width="1" height="1" fill="#000"/><rect x="4" y="1" width="1" height="1" fill="#b4b4b4"/><rect x="4" y="2" width="1" height="1" fill="#000"/><rect x="4" y="4" width="1" height="1" fill="#b4b4b4"/><rect x="4" y="5" width="1" height="1" fill="#000"/><rect x="7" y="1" width="1" height="1" fill="#b4b4b4"/><rect x="7" y="2" width="1" height="1" fill="#000"/><rect x="7" y="4" width="1" height="1" fill="#b4b4b4"/><rect x="7" y="5" width="1" height="1" fill="#000"/><rect x="10" y="1" width="1" height="1" fill="#b4b4b4"/><rect x="10" y="2" width="1" height="1" fill="#000"/><rect x="10" y="4" width="1" height="1" fill="#b4b4b4"/><rect x="10" y="5" width="1" height="1" fill="#000"/></svg><div class="a" style="left:1308px;top:114px;width:226px;height:18px;background:#545454;border-radius:4px;"></div><div class="a t" style="left:1323px;top:116.84px;font-size:12px;line-height:12px;color:#e6e6e6;">Port</div><div class="a t" style="left:1400px;top:116.84px;font-size:12px;line-height:12px;color:#e6e6e6;width:120px;text-align:right;">9876</div><div class="a" style="left:1308px;top:142px;width:12px;height:12px;background:#545454;border-radius:3px;"></div><div class="a t" style="left:1324px;top:141.84px;font-size:12px;line-height:12px;color:#e6e6e6;">Use assets from Poly Haven</div><div class="a" style="left:1308px;top:167.5px;width:12px;height:12px;background:#545454;border-radius:3px;"></div><div class="a t" style="left:1324px;top:167.34px;font-size:12px;line-height:12px;color:#e6e6e6;">Use Hyper3D Rodin 3D model gener...</div><div class="a" style="left:1308px;top:189px;width:226px;height:18px;background:#545454;border-radius:4px;"></div><div class="a t" style="left:1308px;top:191.84px;font-size:12px;line-height:12px;color:#e6e6e6;width:226px;text-align:center;">Start MCP Server</div><div class="a" style="left:1573px;top:27px;width:327px;height:315px;background:#282828;border-radius:6px;"></div><div class="a" style="left:1573px;top:27px;width:327px;height:25px;background:#303030;border-radius:6px 6px 0 0;"></div><div class="a" style="left:1581px;top:30px;width:32px;height:19px;background:#282828;border-radius:4px;border:1px solid #3a3a3a;"></div><svg class="a" style="left:1584px;top:31px;" width="26" height="17" viewBox="0 0 26 17"><rect x="2" y="2" width="5" height="2.5" fill="#e6e6e6"/><path d="M4 4.5V13H7" fill="none" stroke="#e6e6e6" stroke-width="1"/><rect x="7.5" y="7.5" width="7" height="2.5" fill="#e6e6e6"/><rect x="7.5" y="11.5" width="7" height="2.5" fill="#e6e6e6"/><path d="M18 7.5L20.5 10L23 7.5" fill="none" stroke="#e6e6e6" stroke-width="1.2"/></svg><div class="a" style="left:1618px;top:30px;width:32px;height:19px;background:#282828;border-radius:4px;border:1px solid #3a3a3a;"></div><svg class="a" style="left:1621px;top:31px;" width="28" height="17" viewBox="0 0 28 17"><path d="M3 5V14H12" fill="none" stroke="#e6e6e6" stroke-width="1"/><path d="M5 3.5V12H13.5V3.5Z" fill="none" stroke="#e6e6e6" stroke-width="1.2"/><path d="M6 11L9 6L11 9L12 7.5L13 11Z" fill="#e6e6e6"/><path d="M20 7.5L22.5 10L25 7.5" fill="none" stroke="#e6e6e6" stroke-width="1.2"/></svg><div class="a" style="left:1667px;top:30px;width:118px;height:19px;background:#1d1d1d;border-radius:4px;border:1px solid #353535;"></div><svg class="a" style="left:1671px;top:31px;" width="16" height="16" viewBox="0 0 16 16"><circle cx="9.5" cy="6.5" r="4.3" fill="none" stroke="#d0d0d0" stroke-width="1.2"/><path d="M6.5 9.5L2 14" stroke="#d0d0d0" stroke-width="1.2"/></svg><div class="a t" style="left:1693px;top:33.84px;font-size:12px;line-height:12px;color:#7a7a7a;"><span style="letter-spacing:-1.00px">搜索</span></div><div class="a" style="left:1837px;top:30px;width:31px;height:19px;background:#282828;border-radius:4px;border:1px solid #3a3a3a;"></div><svg class="a" style="left:1839px;top:31px;" width="28" height="17" viewBox="0 0 28 17"><path d="M2 3H13L8.5 8.5V14L6.5 12V8.5Z" fill="none" stroke="#e6e6e6" stroke-width="1.2"/><path d="M18 7.5L20.5 10L23 7.5" fill="none" stroke="#e6e6e6" stroke-width="1.2"/></svg><div class="a" style="left:1874.5px;top:30px;width:19px;height:19px;background:#545454;border-radius:4px;"></div><svg class="a" style="left:1876px;top:31px;" width="16" height="16" viewBox="0 0 16 16"><path d="M2 6H11V14H2ZM2 8.5H11" fill="none" stroke="#d0d0d0" stroke-width="1.1"/><circle cx="12" cy="4" r="3.3" fill="#545454" stroke="#e6e6e6" stroke-width="1"/><path d="M12 2.3V5.7M10.3 4H13.7" stroke="#e6e6e6" stroke-width="1"/></svg><div class="a" style="left:1573px;top:73.5px;width:327px;height:20px;background:#2b2b2b;"></div><div class="a" style="left:1573px;top:113.5px;width:327px;height:20px;background:#2b2b2b;"></div><div class="a" style="left:1573px;top:153.5px;width:327px;height:20px;background:#2b2b2b;"></div><div class="a" style="left:1573px;top:193.5px;width:327px;height:20px;background:#2b2b2b;"></div><div class="a" style="left:1573px;top:233.5px;width:327px;height:20px;background:#2b2b2b;"></div><div class="a" style="left:1573px;top:273.5px;width:327px;height:20px;background:#2b2b2b;"></div><div class="a" style="left:1573px;top:313.5px;width:327px;height:20px;background:#2b2b2b;"></div><svg class="a" style="left:1595px;top:55px;" width="16" height="16" viewBox="0 0 16 16"><rect x="1.5" y="2" width="13" height="3" fill="#e6e6e6"/><path d="M2.5 6H13.5V14H2.5Z" fill="#e6e6e6"/><rect x="6" y="8" width="4" height="1.5" fill="#282828"/></svg><div class="a t" style="left:1617px;top:57.84px;font-size:12px;line-height:12px;color:#d8d8d8;"><span style="letter-spacing:-1.00px">场景集合</span></div><svg class="a" style="left:1598.5px;top:79px;" width="10" height="10" viewBox="0 0 10 10"><path d="M1 3.4L5.0 6.6L9 3.4" fill="none" stroke="#c8c8c8" stroke-width="1.1"/></svg><div class="a" style="left:1613px;top:74.5px;width:19.5px;height:19.5px;background:#454545;border-radius:4px;border:1px solid #555;"></div><svg class="a" style="left:1615px;top:76px;" width="16" height="16" viewBox="0 0 16 16"><rect x="1.5" y="2" width="13" height="3" fill="#e6e6e6"/><path d="M2.5 6H13.5V14H2.5Z" fill="#e6e6e6"/><rect x="6" y="8" width="4" height="1.5" fill="#454545"/></svg><div class="a t" style="left:1637px;top:78.34px;font-size:12px;line-height:12px;color:#e0e0e0;">Collection</div><div class="a" style="left:1837px;top:79px;width:10.5px;height:10.5px;background:#e6e6e6;border-radius:2px;"></div><svg class="a" style="left:1837px;top:79px;" width="11" height="11" viewBox="0 0 11 11"><path d="M2.5 5.5L4.5 7.5L8.5 3" fill="none" stroke="#222" stroke-width="1.6"/></svg><svg class="a" style="left:1855px;top:77px;" width="15" height="14" viewBox="0 0 15 14"><path d="M1 7Q7.5 0 14 7Q7.5 14 1 7Z" fill="none" stroke="#e6e6e6" stroke-width="1.4"/><circle cx="7.5" cy="7" r="2.4" fill="#e6e6e6"/></svg><svg class="a" style="left:1875px;top:76.5px;" width="15" height="15" viewBox="0 0 15 15"><path d="M1 4H4L5.5 2H9.5L11 4H14V13H1Z" fill="#e6e6e6"/><circle cx="7.5" cy="8.3" r="3" fill="#282828"/><circle cx="7.5" cy="8.3" r="1.7" fill="#e6e6e6"/></svg><svg class="a" style="left:1855px;top:97px;" width="15" height="14" viewBox="0 0 15 14"><path d="M1 7Q7.5 0 14 7Q7.5 14 1 7Z" fill="none" stroke="#e6e6e6" stroke-width="1.4"/><circle cx="7.5" cy="7" r="2.4" fill="#e6e6e6"/></svg><svg class="a" style="left:1875px;top:96.5px;" width="15" height="15" viewBox="0 0 15 15"><path d="M1 4H4L5.5 2H9.5L11 4H14V13H1Z" fill="#e6e6e6"/><circle cx="7.5" cy="8.3" r="3" fill="#282828"/><circle cx="7.5" cy="8.3" r="1.7" fill="#e6e6e6"/></svg><svg class="a" style="left:1855px;top:117px;" width="15" height="14" viewBox="0 0 15 14"><path d="M1 7Q7.5 0 14 7Q7.5 14 1 7Z" fill="none" stroke="#e6e6e6" stroke-width="1.4"/><circle cx="7.5" cy="7" r="2.4" fill="#e6e6e6"/></svg><svg class="a" style="left:1875px;top:116.5px;" width="15" height="15" viewBox="0 0 15 15"><path d="M1 4H4L5.5 2H9.5L11 4H14V13H1Z" fill="#e6e6e6"/><circle cx="7.5" cy="8.3" r="3" fill="#282828"/><circle cx="7.5" cy="8.3" r="1.7" fill="#e6e6e6"/></svg><svg class="a" style="left:1855px;top:137px;" width="15" height="14" viewBox="0 0 15 14"><path d="M1 7Q7.5 0 14 7Q7.5 14 1 7Z" fill="none" stroke="#e6e6e6" stroke-width="1.4"/><circle cx="7.5" cy="7" r="2.4" fill="#e6e6e6"/></svg><svg class="a" style="left:1875px;top:136.5px;" width="15" height="15" viewBox="0 0 15 15"><path d="M1 4H4L5.5 2H9.5L11 4H14V13H1Z" fill="#e6e6e6"/><circle cx="7.5" cy="8.3" r="3" fill="#282828"/><circle cx="7.5" cy="8.3" r="1.7" fill="#e6e6e6"/></svg><div class="a" style="left:1602px;top:98px;width:1px;height:50px;background:#5a5a5a;"></div><svg class="a" style="left:1618px;top:99px;" width="10" height="10" viewBox="0 0 10 10"><path d="M3.4 1L6.6 5.0L3.4 9" fill="none" stroke="#c8c8c8" stroke-width="1.1"/></svg><div class="a t" style="left:1657px;top:98.34px;font-size:12px;line-height:12px;color:#e0e0e0;">Camera</div><svg class="a" style="left:1618px;top:119px;" width="10" height="10" viewBox="0 0 10 10"><path d="M3.4 1L6.6 5.0L3.4 9" fill="none" stroke="#c8c8c8" stroke-width="1.1"/></svg><div class="a t" style="left:1657px;top:118.34px;font-size:12px;line-height:12px;color:#e0e0e0;">Cube</div><svg class="a" style="left:1618px;top:139px;" width="10" height="10" viewBox="0 0 10 10"><path d="M3.4 1L6.6 5.0L3.4 9" fill="none" stroke="#c8c8c8" stroke-width="1.1"/></svg><div class="a t" style="left:1657px;top:138.34px;font-size:12px;line-height:12px;color:#e0e0e0;">Light</div><svg class="a" style="left:1635px;top:96px;" width="16" height="16" viewBox="0 0 16 16"><circle cx="5" cy="4.5" r="3" fill="#dd8a4c"/><circle cx="10.5" cy="4.5" r="3" fill="#dd8a4c"/><rect x="2.5" y="8" width="9" height="6" fill="#dd8a4c"/><path d="M11.5 11L15 8.5V14Z" fill="#dd8a4c"/></svg><div class="a" style="left:1717px;top:94.5px;width:20px;height:19.5px;background:#454545;border-radius:4px;border:1px solid #555;"></div><svg class="a" style="left:1719px;top:96px;" width="16" height="16" viewBox="0 0 16 16"><circle cx="5" cy="5" r="2.5" fill="none" stroke="#40c8a0" stroke-width="1.1"/><path d="M2 5Q6 0 12 3Q15 6 11 8H5" fill="none" stroke="#40c8a0" stroke-width="1.1"/><rect x="3.5" y="9.5" width="7" height="4.5" fill="none" stroke="#40c8a0" stroke-width="1.1"/><path d="M11 12L15 10V14Z M1 11H3" fill="none" stroke="#40c8a0" stroke-width="1"/></svg><div class="a" style="left:1633px;top:114.5px;width:19.5px;height:19.5px;background:#454545;border-radius:4px;border:1px solid #555;"></div><svg class="a" style="left:1635px;top:116px;" width="16" height="16" viewBox="0 0 16 16"><path d="M1.5 1.8H14.5L8 14.8Z" fill="#dd8a4c"/><path d="M5.2 4.8H10.8L8 10.2Z" fill="#454545"/></svg><svg class="a" style="left:1707px;top:116px;" width="16" height="16" viewBox="0 0 16 16"><path d="M3 3H13L8 13Z" fill="none" stroke="#40c8a0" stroke-width="1.1"/><rect x="1.5" y="1.5" width="3" height="3" fill="#282828" stroke="#40c8a0"/><rect x="11.5" y="1.5" width="3" height="3" fill="#282828" stroke="#40c8a0"/><rect x="6.5" y="11.5" width="3" height="3" fill="#282828" stroke="#40c8a0"/></svg><svg class="a" style="left:1635px;top:136px;" width="16" height="16" viewBox="0 0 16 16"><circle cx="8" cy="6" r="5" fill="#dd8a4c"/><rect x="5" y="10" width="6" height="2" fill="#dd8a4c"/><rect x="6" y="13" width="4" height="1.5" fill="#dd8a4c"/><path d="M6 6L7 8H9L10 6" fill="none" stroke="#282828" stroke-width="0.9"/></svg><svg class="a" style="left:1707px;top:136px;" width="16" height="16" viewBox="0 0 16 16"><circle cx="8" cy="7" r="5.5" fill="none" stroke="#40c8a0" stroke-width="1.1"/><circle cx="8" cy="7" r="1.2" fill="#40c8a0"/><path d="M8 8V15" stroke="#40c8a0" stroke-width="1" stroke-dasharray="1.5 1"/></svg><div class="a" style="left:1573px;top:345px;width:327px;height:671px;background:#2b2b2b;border-radius:6px;"></div><div class="a" style="left:1573px;top:345px;width:327px;height:25px;background:#303030;border-radius:6px 6px 0 0;"></div><div class="a" style="left:1581px;top:347.5px;width:32px;height:19px;background:#282828;border-radius:4px;border:1px solid #3a3a3a;"></div><svg class="a" style="left:1584px;top:349px;" width="26" height="17" viewBox="0 0 26 17"><rect x="2" y="2" width="12" height="5" rx="2.5" fill="#e6e6e6"/><rect x="2" y="9" width="12" height="5" rx="2.5" fill="#e6e6e6"/><circle cx="11.5" cy="4.5" r="1.6" fill="#282828"/><circle cx="4.5" cy="11.5" r="1.6" fill="#282828"/><path d="M18 7.5L20.5 10L23 7.5" fill="none" stroke="#e6e6e6" stroke-width="1.2"/></svg><div class="a" style="left:1679.5px;top:347.5px;width:118px;height:19px;background:#1d1d1d;border-radius:4px;border:1px solid #353535;"></div><svg class="a" style="left:1684px;top:349px;" width="16" height="16" viewBox="0 0 16 16"><circle cx="9.5" cy="6.5" r="4.3" fill="none" stroke="#d0d0d0" stroke-width="1.2"/><path d="M6.5 9.5L2 14" stroke="#d0d0d0" stroke-width="1.2"/></svg><div class="a t" style="left:1705px;top:351.34px;font-size:12px;line-height:12px;color:#7a7a7a;"><span style="letter-spacing:-1.00px">搜索</span></div><div class="a" style="left:1874.5px;top:347.5px;width:19px;height:19px;background:#282828;border-radius:4px;border:1px solid #3a3a3a;"></div><svg class="a" style="left:1879.5px;top:352.5px;" width="9" height="9" viewBox="0 0 9 9"><path d="M1 3.1L4.5 5.8999999999999995L8 3.1" fill="none" stroke="#e6e6e6" stroke-width="1.3"/></svg><div class="a" style="left:1573px;top:370px;width:28px;height:646px;background:#1d1d1d;border-radius:0 0 0 6px;"></div><div class="a" style="left:1573px;top:600px;width:28px;height:24.5px;background:#303030;border-radius:4px 0 0 4px;"></div><div class="a" style="left:1575px;top:407px;width:24px;height:1px;background:#2a2a2a;"></div><div class="a" style="left:1575px;top:557px;width:24px;height:1px;background:#2a2a2a;"></div><div class="a" style="left:1575px;top:591px;width:24px;height:1px;background:#2a2a2a;"></div><div class="a" style="left:1575px;top:796px;width:24px;height:1px;background:#2a2a2a;"></div><svg class="a" style="left:1580px;top:383px;" width="16" height="16" viewBox="0 0 16 16"><path d="M3.5 1V8" stroke="#d0d0d0" stroke-width="1.3"/><ellipse cx="3.5" cy="11" rx="2.4" ry="3" fill="#d0d0d0"/><path d="M9.5 1.2V3.5A2.6 2.6 0 0 0 14.7 3.5V1.2M12.1 6V13.5" fill="none" stroke="#d0d0d0" stroke-width="1.7" stroke-linecap="round"/></svg><svg class="a" style="left:1580px;top:419px;" width="16" height="16" viewBox="0 0 16 16"><rect x="1.5" y="4" width="13" height="10" rx="1" fill="none" stroke="#d0d0d0" stroke-width="1.4"/><path d="M3.5 7H10M3.5 9H10M3.5 11H10" stroke="#d0d0d0" stroke-width="1"/><rect x="11" y="6.5" width="2" height="2" fill="#d0d0d0"/><rect x="11" y="10" width="2" height="2" fill="#d0d0d0"/><rect x="10.5" y="1.8" width="2.5" height="1.2" fill="#d0d0d0"/></svg><svg class="a" style="left:1580px;top:448px;" width="16" height="16" viewBox="0 0 16 16"><rect x="1" y="1" width="14" height="5" rx="1.2" fill="#d0d0d0"/><rect x="3" y="6" width="10" height="9" fill="#d0d0d0"/><rect x="4.5" y="7" width="7" height="6.5" fill="#555"/><path d="M5 13L8 9.5L10.5 12.5L11 13Z" fill="#d0d0d0"/></svg><svg class="a" style="left:1580px;top:476px;" width="16" height="16" viewBox="0 0 16 16"><path d="M1.5 6V15H11M3.5 4V13H13" fill="none" stroke="#c8c8c8" stroke-width="1"/><rect x="5.5" y="1.5" width="9" height="9" fill="none" stroke="#d0d0d0" stroke-width="1.2"/><path d="M6.5 9.5L9.5 5.5L12 8.5L13.5 9.5Z" fill="#d0d0d0"/><circle cx="12" cy="4" r="1" fill="#d0d0d0"/></svg><svg class="a" style="left:1580px;top:504px;" width="16" height="16" viewBox="0 0 16 16"><path d="M5 2L1 10.5A3.2 3.2 0 0 0 8 11Z" fill="#c8c8c8"/><circle cx="12.5" cy="4" r="2.1" fill="#d0d0d0"/><circle cx="10" cy="11.5" r="3.6" fill="#1d1d1d" stroke="#d0d0d0" stroke-width="1.3"/></svg><svg class="a" style="left:1580px;top:532px;" width="16" height="16" viewBox="0 0 16 16"><circle cx="8" cy="8.5" r="6.3" fill="none" stroke="#c05a64" stroke-width="1.3"/><path d="M3.5 5.5Q6 5 7 7.5Q6 9.5 7.5 11.5L6.5 14M9 3Q10 5 12.5 5.5L13.5 8Q11 8 10.5 10L13 12" fill="#c05a64" stroke="#c05a64" stroke-width="1.6"/><path d="M2 15L14.5 1.5" stroke="#c05a64" stroke-width="1"/></svg><svg class="a" style="left:1580px;top:566px;" width="16" height="16" viewBox="0 0 16 16"><rect x="1.5" y="2" width="13" height="3.2" fill="#e6e6e6"/><path d="M2.5 6.5H13.5V14H2.5Z" fill="none" stroke="#e6e6e6" stroke-width="1.3"/><rect x="6" y="8.5" width="4" height="1.5" fill="#e6e6e6"/></svg><svg class="a" style="left:1580px;top:604px;" width="16" height="16" viewBox="0 0 16 16"><path d="M1.5 5V1.5H5M11 1.5H14.5V5M14.5 11V14.5H11M5 14.5H1.5V11" fill="none" stroke="#dd8a4c" stroke-width="1.2"/><rect x="4" y="4" width="8" height="8" fill="#dd8a4c"/></svg><svg class="a" style="left:1580px;top:633px;" width="16" height="16" viewBox="0 0 16 16"><circle cx="10.8" cy="5.2" r="3.3" fill="none" stroke="#6a8fe0" stroke-width="2.3"/><path d="M10.8 5.2L15.5 0.5" stroke="#1d1d1d" stroke-width="2.6"/><path d="M8.5 7.5L3 13" stroke="#6a8fe0" stroke-width="2.6" stroke-linecap="round"/></svg><svg class="a" style="left:1580px;top:659px;" width="16" height="16" viewBox="0 0 16 16"><circle cx="3.5" cy="4.3" r="2.4" fill="#6a8fe0"/><circle cx="13.9" cy="4.3" r="1.5" fill="#6a8fe0"/><circle cx="3.5" cy="14" r="1.5" fill="#6a8fe0"/><circle cx="13.9" cy="14" r="1.6" fill="#6a8fe0"/><path d="M3.5 4.3H13.9M3.5 4.3V14M3.5 4.3L13.9 14" stroke="#6a8fe0" stroke-width="1.1"/></svg><svg class="a" style="left:1580px;top:687px;" width="16" height="16" viewBox="0 0 16 16"><path d="M11.5 5A5.6 5.6 0 1 0 13 9.5" fill="none" stroke="#6a8fe0" stroke-width="1.4"/><circle cx="7.5" cy="9" r="2.9" fill="#6a8fe0"/><circle cx="13.2" cy="3" r="1.9" fill="#6a8fe0"/></svg><svg class="a" style="left:1580px;top:716px;" width="16" height="16" viewBox="0 0 16 16"><path d="M3 13.5Q0.5 9.5 5 5L10 1.8Q14.5 0.5 14.5 5L11.5 10Q8 14.5 3 13.5Z" fill="none" stroke="#6a8fe0" stroke-width="1.5"/><circle cx="7" cy="9" r="2.2" fill="#6a8fe0"/></svg><svg class="a" style="left:1580px;top:744px;" width="16" height="16" viewBox="0 0 16 16"><path d="M3 3H13L8 13Z" fill="none" stroke="#40c8a0" stroke-width="1.2"/><rect x="1.5" y="1.5" width="3" height="3" fill="#1d1d1d" stroke="#40c8a0"/><rect x="11.5" y="1.5" width="3" height="3" fill="#1d1d1d" stroke="#40c8a0"/><rect x="6.5" y="11.5" width="3" height="3" fill="#1d1d1d" stroke="#40c8a0"/></svg><svg class="a" style="left:1580px;top:772px;" width="16" height="16" viewBox="0 0 16 16"><circle cx="8" cy="8" r="6.5" fill="#c86a78"/><path d="M8 8V14.5A6.5 6.5 0 0 1 1.5 8Z" fill="#111"/><path d="M8 8H14.5A6.5 6.5 0 0 1 8 14.5Z" fill="#9a4a56"/><circle cx="8" cy="8" r="1.3" fill="#111"/></svg><svg class="a" style="left:1611px;top:380.5px;" width="16" height="16" viewBox="0 0 16 16"><path d="M2 5V2H5M11 2H14V5M14 11V14H11M5 14H2V11" fill="none" stroke="#dcdcdc" stroke-width="1.2"/><rect x="4.5" y="4.5" width="7" height="7" fill="#e6e6e6"/></svg><div class="a t" style="left:1635px;top:382.34px;font-size:12px;line-height:12px;color:#e6e6e6;">Cube</div><svg class="a" style="left:1877px;top:380px;" width="16" height="16" viewBox="0 0 16 16"><path d="M9 2L14 7M10 3L5.5 6.5L9.5 10.5L13 6M7.5 8.5L2 14" fill="none" stroke="#b0b0b0" stroke-width="1.1"/></svg><div class="a" style="left:1610px;top:414.5px;width:283.5px;height:19px;background:#1d1d1d;border-radius:4px;border:1px solid #333;"></div><div class="a" style="left:1610px;top:414.5px;width:30px;height:19px;background:#282828;border-radius:4px 0 0 4px;border:1px solid #333;"></div><svg class="a" style="left:1613px;top:416px;" width="16" height="16" viewBox="0 0 16 16"><path d="M2 5V2H5M11 2H14V5M14 11V14H11M5 14H2V11" fill="none" stroke="#dcdcdc" stroke-width="1.2"/><rect x="4.5" y="4.5" width="7" height="7" fill="#e6e6e6"/></svg><svg class="a" style="left:1630.5px;top:420.5px;" width="8" height="8" viewBox="0 0 8 8"><path d="M1 2.8L4.0 5.199999999999999L7 2.8" fill="none" stroke="#dcdcdc" stroke-width="1.3"/></svg><div class="a t" style="left:1648px;top:418.34px;font-size:12px;line-height:12px;color:#e6e6e6;">Cube</div><div class="a" style="left:1609px;top:444px;width:285px;height:280.5px;background:#3d3d3d;border-radius:5px;"></div><svg class="a" style="left:1617.5px;top:451.5px;" width="10" height="10" viewBox="0 0 10 10"><path d="M1 3.4L5.0 6.6L9 3.4" fill="none" stroke="#d8d8d8" stroke-width="1.3"/></svg><div class="a t" style="left:1631px;top:450.84px;font-size:12px;line-height:12px;color:#e6e6e6;"><span style="letter-spacing:-1.00px">变换</span></div><svg class="a" style="left:1876px;top:453.5px;" width="12" height="7" viewBox="0 0 12 7"><rect x="1" y="1" width="1" height="1" fill="#b4b4b4"/><rect x="1" y="2" width="1" height="1" fill="#000"/><rect x="1" y="4" width="1" height="1" fill="#b4b4b4"/><rect x="1" y="5" width="1" height="1" fill="#000"/><rect x="4" y="1" width="1" height="1" fill="#b4b4b4"/><rect x="4" y="2" width="1" height="1" fill="#000"/><rect x="4" y="4" width="1" height="1" fill="#b4b4b4"/><rect x="4" y="5" width="1" height="1" fill="#000"/><rect x="7" y="1" width="1" height="1" fill="#b4b4b4"/><rect x="7" y="2" width="1" height="1" fill="#000"/><rect x="7" y="4" width="1" height="1" fill="#b4b4b4"/><rect x="7" y="5" width="1" height="1" fill="#000"/><rect x="10" y="1" width="1" height="1" fill="#b4b4b4"/><rect x="10" y="2" width="1" height="1" fill="#000"/><rect x="10" y="4" width="1" height="1" fill="#b4b4b4"/><rect x="10" y="5" width="1" height="1" fill="#000"/></svg><div class="a" style="left:1722px;top:477.5px;width:123px;height:19px;background:#545454;"></div><div class="a t" style="left:1600px;top:480.84px;font-size:12px;line-height:12px;color:#e6e6e6;width:112px;text-align:right;"><span style="letter-spacing:-1.00px">位置</span> X</div><div class="a t" style="left:1722px;top:480.84px;font-size:12px;line-height:12px;color:#e6e6e6;width:123px;text-align:center;">0 m</div><svg class="a" style="left:1848px;top:480.5px;" width="14" height="14" viewBox="0 0 14 14"><path d="M2.5 6V3.5A2.5 2.5 0 0 1 7.5 3.5" fill="none" stroke="#d0d0d0" stroke-width="1"/><rect x="4.5" y="6.5" width="8" height="6" fill="none" stroke="#d0d0d0" stroke-width="1"/><rect x="8" y="9" width="1.2" height="1.5" fill="#d0d0d0"/></svg><div class="a" style="left:1874px;top:485px;width:4px;height:4px;background:#e6e6e6;border-radius:2px;"></div><div class="a" style="left:1722px;top:497px;width:123px;height:19px;background:#545454;"></div><div class="a t" style="left:1600px;top:500.34px;font-size:12px;line-height:12px;color:#e6e6e6;width:112px;text-align:right;">Y</div><div class="a t" style="left:1722px;top:500.34px;font-size:12px;line-height:12px;color:#e6e6e6;width:123px;text-align:center;">0 m</div><svg class="a" style="left:1848px;top:500px;" width="14" height="14" viewBox="0 0 14 14"><path d="M2.5 6V3.5A2.5 2.5 0 0 1 7.5 3.5" fill="none" stroke="#d0d0d0" stroke-width="1"/><rect x="4.5" y="6.5" width="8" height="6" fill="none" stroke="#d0d0d0" stroke-width="1"/><rect x="8" y="9" width="1.2" height="1.5" fill="#d0d0d0"/></svg><div class="a" style="left:1874px;top:504.5px;width:4px;height:4px;background:#e6e6e6;border-radius:2px;"></div><div class="a" style="left:1722px;top:516.5px;width:123px;height:19px;background:#545454;"></div><div class="a t" style="left:1600px;top:519.84px;font-size:12px;line-height:12px;color:#e6e6e6;width:112px;text-align:right;">Z</div><div class="a t" style="left:1722px;top:519.84px;font-size:12px;line-height:12px;color:#e6e6e6;width:123px;text-align:center;">0 m</div><svg class="a" style="left:1848px;top:519.5px;" width="14" height="14" viewBox="0 0 14 14"><path d="M2.5 6V3.5A2.5 2.5 0 0 1 7.5 3.5" fill="none" stroke="#d0d0d0" stroke-width="1"/><rect x="4.5" y="6.5" width="8" height="6" fill="none" stroke="#d0d0d0" stroke-width="1"/><rect x="8" y="9" width="1.2" height="1.5" fill="#d0d0d0"/></svg><div class="a" style="left:1874px;top:524px;width:4px;height:4px;background:#e6e6e6;border-radius:2px;"></div><div class="a" style="left:1722px;top:543px;width:123px;height:19px;background:#545454;"></div><div class="a t" style="left:1600px;top:546.34px;font-size:12px;line-height:12px;color:#e6e6e6;width:112px;text-align:right;"><span style="letter-spacing:-1.00px">旋转</span> X</div><div class="a t" style="left:1722px;top:546.34px;font-size:12px;line-height:12px;color:#e6e6e6;width:123px;text-align:center;">0°</div><svg class="a" style="left:1848px;top:546px;" width="14" height="14" viewBox="0 0 14 14"><path d="M2.5 6V3.5A2.5 2.5 0 0 1 7.5 3.5" fill="none" stroke="#d0d0d0" stroke-width="1"/><rect x="4.5" y="6.5" width="8" height="6" fill="none" stroke="#d0d0d0" stroke-width="1"/><rect x="8" y="9" width="1.2" height="1.5" fill="#d0d0d0"/></svg><div class="a" style="left:1874px;top:550.5px;width:4px;height:4px;background:#e6e6e6;border-radius:2px;"></div><div class="a" style="left:1722px;top:562.5px;width:123px;height:19px;background:#545454;"></div><div class="a t" style="left:1600px;top:565.84px;font-size:12px;line-height:12px;color:#e6e6e6;width:112px;text-align:right;">Y</div><div class="a t" style="left:1722px;top:565.84px;font-size:12px;line-height:12px;color:#e6e6e6;width:123px;text-align:center;">0°</div><svg class="a" style="left:1848px;top:565.5px;" width="14" height="14" viewBox="0 0 14 14"><path d="M2.5 6V3.5A2.5 2.5 0 0 1 7.5 3.5" fill="none" stroke="#d0d0d0" stroke-width="1"/><rect x="4.5" y="6.5" width="8" height="6" fill="none" stroke="#d0d0d0" stroke-width="1"/><rect x="8" y="9" width="1.2" height="1.5" fill="#d0d0d0"/></svg><div class="a" style="left:1874px;top:570px;width:4px;height:4px;background:#e6e6e6;border-radius:2px;"></div><div class="a" style="left:1722px;top:582px;width:123px;height:19px;background:#545454;"></div><div class="a t" style="left:1600px;top:585.34px;font-size:12px;line-height:12px;color:#e6e6e6;width:112px;text-align:right;">Z</div><div class="a t" style="left:1722px;top:585.34px;font-size:12px;line-height:12px;color:#e6e6e6;width:123px;text-align:center;">0°</div><svg class="a" style="left:1848px;top:585px;" width="14" height="14" viewBox="0 0 14 14"><path d="M2.5 6V3.5A2.5 2.5 0 0 1 7.5 3.5" fill="none" stroke="#d0d0d0" stroke-width="1"/><rect x="4.5" y="6.5" width="8" height="6" fill="none" stroke="#d0d0d0" stroke-width="1"/><rect x="8" y="9" width="1.2" height="1.5" fill="#d0d0d0"/></svg><div class="a" style="left:1874px;top:589.5px;width:4px;height:4px;background:#e6e6e6;border-radius:2px;"></div><div class="a" style="left:1722px;top:633px;width:123px;height:19px;background:#545454;"></div><div class="a t" style="left:1600px;top:636.34px;font-size:12px;line-height:12px;color:#e6e6e6;width:112px;text-align:right;"><span style="letter-spacing:-1.00px">缩放</span> X</div><div class="a t" style="left:1722px;top:636.34px;font-size:12px;line-height:12px;color:#e6e6e6;width:123px;text-align:center;">1.000</div><svg class="a" style="left:1848px;top:636px;" width="14" height="14" viewBox="0 0 14 14"><path d="M2.5 6V3.5A2.5 2.5 0 0 1 7.5 3.5" fill="none" stroke="#d0d0d0" stroke-width="1"/><rect x="4.5" y="6.5" width="8" height="6" fill="none" stroke="#d0d0d0" stroke-width="1"/><rect x="8" y="9" width="1.2" height="1.5" fill="#d0d0d0"/></svg><div class="a" style="left:1874px;top:640.5px;width:4px;height:4px;background:#e6e6e6;border-radius:2px;"></div><div class="a" style="left:1722px;top:652.5px;width:123px;height:19px;background:#545454;"></div><div class="a t" style="left:1600px;top:655.84px;font-size:12px;line-height:12px;color:#e6e6e6;width:112px;text-align:right;">Y</div><div class="a t" style="left:1722px;top:655.84px;font-size:12px;line-height:12px;color:#e6e6e6;width:123px;text-align:center;">1.000</div><svg class="a" style="left:1848px;top:655.5px;" width="14" height="14" viewBox="0 0 14 14"><path d="M2.5 6V3.5A2.5 2.5 0 0 1 7.5 3.5" fill="none" stroke="#d0d0d0" stroke-width="1"/><rect x="4.5" y="6.5" width="8" height="6" fill="none" stroke="#d0d0d0" stroke-width="1"/><rect x="8" y="9" width="1.2" height="1.5" fill="#d0d0d0"/></svg><div class="a" style="left:1874px;top:660px;width:4px;height:4px;background:#e6e6e6;border-radius:2px;"></div><div class="a" style="left:1722px;top:672px;width:123px;height:19px;background:#545454;"></div><div class="a t" style="left:1600px;top:675.34px;font-size:12px;line-height:12px;color:#e6e6e6;width:112px;text-align:right;">Z</div><div class="a t" style="left:1722px;top:675.34px;font-size:12px;line-height:12px;color:#e6e6e6;width:123px;text-align:center;">1.000</div><svg class="a" style="left:1848px;top:675px;" width="14" height="14" viewBox="0 0 14 14"><path d="M2.5 6V3.5A2.5 2.5 0 0 1 7.5 3.5" fill="none" stroke="#d0d0d0" stroke-width="1"/><rect x="4.5" y="6.5" width="8" height="6" fill="none" stroke="#d0d0d0" stroke-width="1"/><rect x="8" y="9" width="1.2" height="1.5" fill="#d0d0d0"/></svg><div class="a" style="left:1874px;top:679.5px;width:4px;height:4px;background:#e6e6e6;border-radius:2px;"></div><div class="a" style="left:1722px;top:477.5px;width:123px;height:58px;border-radius:4px;box-shadow:0 1px 0 #2e2e2e;"></div><div class="a" style="left:1722px;top:543px;width:123px;height:58px;border-radius:4px;box-shadow:0 1px 0 #2e2e2e;"></div><div class="a" style="left:1722px;top:633px;width:123px;height:58px;border-radius:4px;box-shadow:0 1px 0 #2e2e2e;"></div><div class="a" style="left:1722px;top:608px;width:123px;height:18px;background:#282828;border-radius:4px;"></div><div class="a t" style="left:1600px;top:610.84px;font-size:12px;line-height:12px;color:#e6e6e6;width:112px;text-align:right;"><span style="letter-spacing:-1.00px">模式</span></div><div class="a t" style="left:1729px;top:610.84px;font-size:12px;line-height:12px;color:#e6e6e6;">XYZ <span style="letter-spacing:-1.00px">欧拉</span></div><svg class="a" style="left:1834px;top:613.5px;" width="8" height="8" viewBox="0 0 8 8"><path d="M1 2.8L4.0 5.199999999999999L7 2.8" fill="none" stroke="#dcdcdc" stroke-width="1.3"/></svg><div class="a" style="left:1874px;top:615.5px;width:4px;height:4px;background:#e6e6e6;border-radius:2px;"></div><svg class="a" style="left:1632px;top:707.5px;" width="10" height="10" viewBox="0 0 10 10"><path d="M3.4 1L6.6 5.0L3.4 9" fill="none" stroke="#c8c8c8" stroke-width="1.1"/></svg><div class="a t" style="left:1645px;top:706.84px;font-size:12px;line-height:12px;color:#e6e6e6;"><span style="letter-spacing:-1.00px">变换增量</span></div><div class="a" style="left:1609px;top:727px;width:285px;height:25px;background:#3d3d3d;border-radius:5px;"></div><svg class="a" style="left:1617px;top:734.5px;" width="10" height="10" viewBox="0 0 10 10"><path d="M3.4 1L6.6 5.0L3.4 9" fill="none" stroke="#c8c8c8" stroke-width="1.1"/></svg><div class="a t" style="left:1631px;top:733.84px;font-size:12px;line-height:12px;color:#e6e6e6;"><span style="letter-spacing:-1.00px">关系</span></div><svg class="a" style="left:1876px;top:736.2px;" width="12" height="7" viewBox="0 0 12 7"><rect x="1" y="1" width="1" height="1" fill="#b4b4b4"/><rect x="1" y="2" width="1" height="1" fill="#000"/><rect x="1" y="4" width="1" height="1" fill="#b4b4b4"/><rect x="1" y="5" width="1" height="1" fill="#000"/><rect x="4" y="1" width="1" height="1" fill="#b4b4b4"/><rect x="4" y="2" width="1" height="1" fill="#000"/><rect x="4" y="4" width="1" height="1" fill="#b4b4b4"/><rect x="4" y="5" width="1" height="1" fill="#000"/><rect x="7" y="1" width="1" height="1" fill="#b4b4b4"/><rect x="7" y="2" width="1" height="1" fill="#000"/><rect x="7" y="4" width="1" height="1" fill="#b4b4b4"/><rect x="7" y="5" width="1" height="1" fill="#000"/><rect x="10" y="1" width="1" height="1" fill="#b4b4b4"/><rect x="10" y="2" width="1" height="1" fill="#000"/><rect x="10" y="4" width="1" height="1" fill="#b4b4b4"/><rect x="10" y="5" width="1" height="1" fill="#000"/></svg><div class="a" style="left:1609px;top:754px;width:285px;height:25px;background:#3d3d3d;border-radius:5px;"></div><svg class="a" style="left:1617px;top:761.5px;" width="10" height="10" viewBox="0 0 10 10"><path d="M3.4 1L6.6 5.0L3.4 9" fill="none" stroke="#c8c8c8" stroke-width="1.1"/></svg><div class="a t" style="left:1631px;top:760.84px;font-size:12px;line-height:12px;color:#e6e6e6;"><span style="letter-spacing:-1.00px">集合</span></div><svg class="a" style="left:1876px;top:763.2px;" width="12" height="7" viewBox="0 0 12 7"><rect x="1" y="1" width="1" height="1" fill="#b4b4b4"/><rect x="1" y="2" width="1" height="1" fill="#000"/><rect x="1" y="4" width="1" height="1" fill="#b4b4b4"/><rect x="1" y="5" width="1" height="1" fill="#000"/><rect x="4" y="1" width="1" height="1" fill="#b4b4b4"/><rect x="4" y="2" width="1" height="1" fill="#000"/><rect x="4" y="4" width="1" height="1" fill="#b4b4b4"/><rect x="4" y="5" width="1" height="1" fill="#000"/><rect x="7" y="1" width="1" height="1" fill="#b4b4b4"/><rect x="7" y="2" width="1" height="1" fill="#000"/><rect x="7" y="4" width="1" height="1" fill="#b4b4b4"/><rect x="7" y="5" width="1" height="1" fill="#000"/><rect x="10" y="1" width="1" height="1" fill="#b4b4b4"/><rect x="10" y="2" width="1" height="1" fill="#000"/><rect x="10" y="4" width="1" height="1" fill="#b4b4b4"/><rect x="10" y="5" width="1" height="1" fill="#000"/></svg><div class="a" style="left:1609px;top:781px;width:285px;height:25px;background:#3d3d3d;border-radius:5px;"></div><svg class="a" style="left:1617px;top:788.5px;" width="10" height="10" viewBox="0 0 10 10"><path d="M3.4 1L6.6 5.0L3.4 9" fill="none" stroke="#c8c8c8" stroke-width="1.1"/></svg><div class="a t" style="left:1631px;top:787.84px;font-size:12px;line-height:12px;color:#e6e6e6;"><span style="letter-spacing:-1.00px">实例化</span></div><svg class="a" style="left:1876px;top:790.2px;" width="12" height="7" viewBox="0 0 12 7"><rect x="1" y="1" width="1" height="1" fill="#b4b4b4"/><rect x="1" y="2" width="1" height="1" fill="#000"/><rect x="1" y="4" width="1" height="1" fill="#b4b4b4"/><rect x="1" y="5" width="1" height="1" fill="#000"/><rect x="4" y="1" width="1" height="1" fill="#b4b4b4"/><rect x="4" y="2" width="1" height="1" fill="#000"/><rect x="4" y="4" width="1" height="1" fill="#b4b4b4"/><rect x="4" y="5" width="1" height="1" fill="#000"/><rect x="7" y="1" width="1" height="1" fill="#b4b4b4"/><rect x="7" y="2" width="1" height="1" fill="#000"/><rect x="7" y="4" width="1" height="1" fill="#b4b4b4"/><rect x="7" y="5" width="1" height="1" fill="#000"/><rect x="10" y="1" width="1" height="1" fill="#b4b4b4"/><rect x="10" y="2" width="1" height="1" fill="#000"/><rect x="10" y="4" width="1" height="1" fill="#b4b4b4"/><rect x="10" y="5" width="1" height="1" fill="#000"/></svg><div class="a" style="left:1609px;top:808px;width:285px;height:25px;background:#3d3d3d;border-radius:5px;"></div><svg class="a" style="left:1617px;top:815.5px;" width="10" height="10" viewBox="0 0 10 10"><path d="M3.4 1L6.6 5.0L3.4 9" fill="none" stroke="#c8c8c8" stroke-width="1.1"/></svg><div class="a t" style="left:1631px;top:814.84px;font-size:12px;line-height:12px;color:#e6e6e6;"><span style="letter-spacing:-1.00px">运动路径</span></div><svg class="a" style="left:1876px;top:817.2px;" width="12" height="7" viewBox="0 0 12 7"><rect x="1" y="1" width="1" height="1" fill="#b4b4b4"/><rect x="1" y="2" width="1" height="1" fill="#000"/><rect x="1" y="4" width="1" height="1" fill="#b4b4b4"/><rect x="1" y="5" width="1" height="1" fill="#000"/><rect x="4" y="1" width="1" height="1" fill="#b4b4b4"/><rect x="4" y="2" width="1" height="1" fill="#000"/><rect x="4" y="4" width="1" height="1" fill="#b4b4b4"/><rect x="4" y="5" width="1" height="1" fill="#000"/><rect x="7" y="1" width="1" height="1" fill="#b4b4b4"/><rect x="7" y="2" width="1" height="1" fill="#000"/><rect x="7" y="4" width="1" height="1" fill="#b4b4b4"/><rect x="7" y="5" width="1" height="1" fill="#000"/><rect x="10" y="1" width="1" height="1" fill="#b4b4b4"/><rect x="10" y="2" width="1" height="1" fill="#000"/><rect x="10" y="4" width="1" height="1" fill="#b4b4b4"/><rect x="10" y="5" width="1" height="1" fill="#000"/></svg><div class="a" style="left:1609px;top:835px;width:285px;height:25px;background:#3d3d3d;border-radius:5px;"></div><svg class="a" style="left:1617px;top:842.5px;" width="10" height="10" viewBox="0 0 10 10"><path d="M3.4 1L6.6 5.0L3.4 9" fill="none" stroke="#c8c8c8" stroke-width="1.1"/></svg><div class="a t" style="left:1631px;top:841.84px;font-size:12px;line-height:12px;color:#e6e6e6;"><span style="letter-spacing:-1.00px">着色方式</span></div><svg class="a" style="left:1876px;top:844.2px;" width="12" height="7" viewBox="0 0 12 7"><rect x="1" y="1" width="1" height="1" fill="#b4b4b4"/><rect x="1" y="2" width="1" height="1" fill="#000"/><rect x="1" y="4" width="1" height="1" fill="#b4b4b4"/><rect x="1" y="5" width="1" height="1" fill="#000"/><rect x="4" y="1" width="1" height="1" fill="#b4b4b4"/><rect x="4" y="2" width="1" height="1" fill="#000"/><rect x="4" y="4" width="1" height="1" fill="#b4b4b4"/><rect x="4" y="5" width="1" height="1" fill="#000"/><rect x="7" y="1" width="1" height="1" fill="#b4b4b4"/><rect x="7" y="2" width="1" height="1" fill="#000"/><rect x="7" y="4" width="1" height="1" fill="#b4b4b4"/><rect x="7" y="5" width="1" height="1" fill="#000"/><rect x="10" y="1" width="1" height="1" fill="#b4b4b4"/><rect x="10" y="2" width="1" height="1" fill="#000"/><rect x="10" y="4" width="1" height="1" fill="#b4b4b4"/><rect x="10" y="5" width="1" height="1" fill="#000"/></svg><div class="a" style="left:1609px;top:862px;width:285px;height:25px;background:#3d3d3d;border-radius:5px;"></div><svg class="a" style="left:1617px;top:869.5px;" width="10" height="10" viewBox="0 0 10 10"><path d="M3.4 1L6.6 5.0L3.4 9" fill="none" stroke="#c8c8c8" stroke-width="1.1"/></svg><div class="a t" style="left:1631px;top:868.84px;font-size:12px;line-height:12px;color:#e6e6e6;"><span style="letter-spacing:-1.00px">可见性</span></div><svg class="a" style="left:1876px;top:871.2px;" width="12" height="7" viewBox="0 0 12 7"><rect x="1" y="1" width="1" height="1" fill="#b4b4b4"/><rect x="1" y="2" width="1" height="1" fill="#000"/><rect x="1" y="4" width="1" height="1" fill="#b4b4b4"/><rect x="1" y="5" width="1" height="1" fill="#000"/><rect x="4" y="1" width="1" height="1" fill="#b4b4b4"/><rect x="4" y="2" width="1" height="1" fill="#000"/><rect x="4" y="4" width="1" height="1" fill="#b4b4b4"/><rect x="4" y="5" width="1" height="1" fill="#000"/><rect x="7" y="1" width="1" height="1" fill="#b4b4b4"/><rect x="7" y="2" width="1" height="1" fill="#000"/><rect x="7" y="4" width="1" height="1" fill="#b4b4b4"/><rect x="7" y="5" width="1" height="1" fill="#000"/><rect x="10" y="1" width="1" height="1" fill="#b4b4b4"/><rect x="10" y="2" width="1" height="1" fill="#000"/><rect x="10" y="4" width="1" height="1" fill="#b4b4b4"/><rect x="10" y="5" width="1" height="1" fill="#000"/></svg><div class="a" style="left:1609px;top:889px;width:285px;height:25px;background:#3d3d3d;border-radius:5px;"></div><svg class="a" style="left:1617px;top:896.5px;" width="10" height="10" viewBox="0 0 10 10"><path d="M3.4 1L6.6 5.0L3.4 9" fill="none" stroke="#c8c8c8" stroke-width="1.1"/></svg><div class="a t" style="left:1631px;top:895.84px;font-size:12px;line-height:12px;color:#e6e6e6;"><span style="letter-spacing:-1.00px">视图显示</span></div><svg class="a" style="left:1876px;top:898.2px;" width="12" height="7" viewBox="0 0 12 7"><rect x="1" y="1" width="1" height="1" fill="#b4b4b4"/><rect x="1" y="2" width="1" height="1" fill="#000"/><rect x="1" y="4" width="1" height="1" fill="#b4b4b4"/><rect x="1" y="5" width="1" height="1" fill="#000"/><rect x="4" y="1" width="1" height="1" fill="#b4b4b4"/><rect x="4" y="2" width="1" height="1" fill="#000"/><rect x="4" y="4" width="1" height="1" fill="#b4b4b4"/><rect x="4" y="5" width="1" height="1" fill="#000"/><rect x="7" y="1" width="1" height="1" fill="#b4b4b4"/><rect x="7" y="2" width="1" height="1" fill="#000"/><rect x="7" y="4" width="1" height="1" fill="#b4b4b4"/><rect x="7" y="5" width="1" height="1" fill="#000"/><rect x="10" y="1" width="1" height="1" fill="#b4b4b4"/><rect x="10" y="2" width="1" height="1" fill="#000"/><rect x="10" y="4" width="1" height="1" fill="#b4b4b4"/><rect x="10" y="5" width="1" height="1" fill="#000"/></svg><div class="a" style="left:1609px;top:916px;width:285px;height:25px;background:#3d3d3d;border-radius:5px;"></div><svg class="a" style="left:1617px;top:923.5px;" width="10" height="10" viewBox="0 0 10 10"><path d="M3.4 1L6.6 5.0L3.4 9" fill="none" stroke="#c8c8c8" stroke-width="1.1"/></svg><div class="a t" style="left:1631px;top:922.84px;font-size:12px;line-height:12px;color:#e6e6e6;"><span style="letter-spacing:-1.00px">线条画</span></div><svg class="a" style="left:1876px;top:925.2px;" width="12" height="7" viewBox="0 0 12 7"><rect x="1" y="1" width="1" height="1" fill="#b4b4b4"/><rect x="1" y="2" width="1" height="1" fill="#000"/><rect x="1" y="4" width="1" height="1" fill="#b4b4b4"/><rect x="1" y="5" width="1" height="1" fill="#000"/><rect x="4" y="1" width="1" height="1" fill="#b4b4b4"/><rect x="4" y="2" width="1" height="1" fill="#000"/><rect x="4" y="4" width="1" height="1" fill="#b4b4b4"/><rect x="4" y="5" width="1" height="1" fill="#000"/><rect x="7" y="1" width="1" height="1" fill="#b4b4b4"/><rect x="7" y="2" width="1" height="1" fill="#000"/><rect x="7" y="4" width="1" height="1" fill="#b4b4b4"/><rect x="7" y="5" width="1" height="1" fill="#000"/><rect x="10" y="1" width="1" height="1" fill="#b4b4b4"/><rect x="10" y="2" width="1" height="1" fill="#000"/><rect x="10" y="4" width="1" height="1" fill="#b4b4b4"/><rect x="10" y="5" width="1" height="1" fill="#000"/></svg><div class="a" style="left:1609px;top:943px;width:285px;height:25px;background:#3d3d3d;border-radius:5px;"></div><svg class="a" style="left:1617px;top:950.5px;" width="10" height="10" viewBox="0 0 10 10"><path d="M3.4 1L6.6 5.0L3.4 9" fill="none" stroke="#c8c8c8" stroke-width="1.1"/></svg><div class="a t" style="left:1631px;top:949.84px;font-size:12px;line-height:12px;color:#e6e6e6;"><span style="letter-spacing:-1.00px">动画</span></div><svg class="a" style="left:1876px;top:952.2px;" width="12" height="7" viewBox="0 0 12 7"><rect x="1" y="1" width="1" height="1" fill="#b4b4b4"/><rect x="1" y="2" width="1" height="1" fill="#000"/><rect x="1" y="4" width="1" height="1" fill="#b4b4b4"/><rect x="1" y="5" width="1" height="1" fill="#000"/><rect x="4" y="1" width="1" height="1" fill="#b4b4b4"/><rect x="4" y="2" width="1" height="1" fill="#000"/><rect x="4" y="4" width="1" height="1" fill="#b4b4b4"/><rect x="4" y="5" width="1" height="1" fill="#000"/><rect x="7" y="1" width="1" height="1" fill="#b4b4b4"/><rect x="7" y="2" width="1" height="1" fill="#000"/><rect x="7" y="4" width="1" height="1" fill="#b4b4b4"/><rect x="7" y="5" width="1" height="1" fill="#000"/><rect x="10" y="1" width="1" height="1" fill="#b4b4b4"/><rect x="10" y="2" width="1" height="1" fill="#000"/><rect x="10" y="4" width="1" height="1" fill="#b4b4b4"/><rect x="10" y="5" width="1" height="1" fill="#000"/></svg><div class="a" style="left:1609px;top:970px;width:285px;height:25px;background:#3d3d3d;border-radius:5px;"></div><svg class="a" style="left:1617px;top:977.5px;" width="10" height="10" viewBox="0 0 10 10"><path d="M3.4 1L6.6 5.0L3.4 9" fill="none" stroke="#c8c8c8" stroke-width="1.1"/></svg><div class="a t" style="left:1631px;top:976.84px;font-size:12px;line-height:12px;color:#e6e6e6;"><span style="letter-spacing:-1.00px">自定义属性</span></div><svg class="a" style="left:1876px;top:979.2px;" width="12" height="7" viewBox="0 0 12 7"><rect x="1" y="1" width="1" height="1" fill="#b4b4b4"/><rect x="1" y="2" width="1" height="1" fill="#000"/><rect x="1" y="4" width="1" height="1" fill="#b4b4b4"/><rect x="1" y="5" width="1" height="1" fill="#000"/><rect x="4" y="1" width="1" height="1" fill="#b4b4b4"/><rect x="4" y="2" width="1" height="1" fill="#000"/><rect x="4" y="4" width="1" height="1" fill="#b4b4b4"/><rect x="4" y="5" width="1" height="1" fill="#000"/><rect x="7" y="1" width="1" height="1" fill="#b4b4b4"/><rect x="7" y="2" width="1" height="1" fill="#000"/><rect x="7" y="4" width="1" height="1" fill="#b4b4b4"/><rect x="7" y="5" width="1" height="1" fill="#000"/><rect x="10" y="1" width="1" height="1" fill="#b4b4b4"/><rect x="10" y="2" width="1" height="1" fill="#000"/><rect x="10" y="4" width="1" height="1" fill="#b4b4b4"/><rect x="10" y="5" width="1" height="1" fill="#000"/></svg><div class="a" style="left:1px;top:944px;width:1568px;height:72px;background:#2b2b2b;border-radius:6px;overflow:hidden;"></div><div class="a" style="left:1px;top:944px;width:1568px;height:25px;background:#303030;border-radius:6px 6px 0 0;"></div><div class="a" style="left:9px;top:947.5px;width:30px;height:19px;background:#282828;border-radius:4px;border:1px solid #3a3a3a;"></div><svg class="a" style="left:12px;top:949px;" width="26" height="16" viewBox="0 0 26 16"><circle cx="8" cy="8" r="6.5" fill="#e6e6e6"/><path d="M9.5 4L6.5 8L9.5 12" fill="none" stroke="#282828" stroke-width="1.8"/><path d="M17 7L19.5 9.5L22 7" fill="none" stroke="#e6e6e6" stroke-width="1.2"/></svg><div class="a" style="left:45.5px;top:947.5px;width:93px;height:19px;background:#282828;border-radius:4px;border:1px solid #3a3a3a;"></div><div class="a" style="left:91.5px;top:948px;width:1px;height:18px;background:#3a3a3a;"></div><div class="a t" style="left:53px;top:950.84px;font-size:12px;line-height:12px;color:#e6e6e6;"><span style="letter-spacing:-1.00px">回放</span></div><svg class="a" style="left:80.5px;top:953.5px;" width="9" height="9" viewBox="0 0 9 9"><path d="M1 3.1L4.5 5.8999999999999995L8 3.1" fill="none" stroke="#dcdcdc" stroke-width="1.3"/></svg><div class="a t" style="left:99px;top:950.84px;font-size:12px;line-height:12px;color:#e6e6e6;"><span style="letter-spacing:-1.00px">插帧</span></div><svg class="a" style="left:127.5px;top:953.5px;" width="9" height="9" viewBox="0 0 9 9"><path d="M1 3.1L4.5 5.8999999999999995L8 3.1" fill="none" stroke="#dcdcdc" stroke-width="1.3"/></svg><div class="a t" style="left:148px;top:950.84px;font-size:12px;line-height:12px;color:#e6e6e6;"><span style="letter-spacing:-1.00px">视图</span></div><div class="a t" style="left:185px;top:950.84px;font-size:12px;line-height:12px;color:#e6e6e6;"><span style="letter-spacing:-1.00px">标记</span></div><div class="a" style="left:693px;top:947.5px;width:38px;height:19px;background:#282828;border-radius:4px;border:1px solid #3a3a3a;"></div><div class="a" style="left:693px;top:947.5px;width:18.5px;height:19px;background:#545454;border-radius:4px 0 0 4px;"></div><svg class="a" style="left:695px;top:950px;" width="14" height="14" viewBox="0 0 14 14"><circle cx="7" cy="7" r="4.8" fill="none" stroke="#d8d8d8" stroke-width="1"/></svg><svg class="a" style="left:717px;top:953px;" width="8" height="8" viewBox="0 0 8 8"><path d="M1 2.8L4.0 5.199999999999999L7 2.8" fill="none" stroke="#666" stroke-width="1.3"/></svg><div class="a" style="left:737.5px;top:947.5px;width:118.5px;height:19px;background:#545454;border-radius:4px;"></div><div class="a" style="left:757.25px;top:947.5px;width:1px;height:19px;background:#4a4a4a;"></div><div class="a" style="left:777px;top:947.5px;width:1px;height:19px;background:#4a4a4a;"></div><div class="a" style="left:796.75px;top:947.5px;width:1px;height:19px;background:#4a4a4a;"></div><div class="a" style="left:816.5px;top:947.5px;width:1px;height:19px;background:#4a4a4a;"></div><div class="a" style="left:836.25px;top:947.5px;width:1px;height:19px;background:#4a4a4a;"></div><svg class="a" style="left:739.5px;top:949px;" width="16" height="16" viewBox="0 0 16 16"><rect x="3.3" y="3" width="2.2" height="11" fill="#e6e6e6"/><path d="M13 3.3V13.7L6.6 8.5Z" fill="#e6e6e6" stroke="#e6e6e6" stroke-width="0.6" stroke-linejoin="round"/></svg><svg class="a" style="left:759.25px;top:949px;" width="16" height="16" viewBox="0 0 16 16"><path d="M0.3 8.5L4.6 3.8L8.9 8.5L4.6 13.2Z" fill="#e6e6e6"/><path d="M15.2 4.3V12.7L10 8.5Z" fill="#e6e6e6"/></svg><svg class="a" style="left:779px;top:949px;" width="16" height="16" viewBox="0 0 16 16"><path d="M12.8 2.5V14.2L4 8.4Z" fill="#e6e6e6" stroke="#e6e6e6" stroke-width="0.8" stroke-linejoin="round"/></svg><svg class="a" style="left:798.75px;top:949px;" width="16" height="16" viewBox="0 0 16 16"><path d="M4 2.5V14.2L12.8 8.4Z" fill="#e6e6e6" stroke="#e6e6e6" stroke-width="0.8" stroke-linejoin="round"/></svg><svg class="a" style="left:818.5px;top:949px;" width="16" height="16" viewBox="0 0 16 16"><path d="M0.6 4.3V12.7L5.8 8.5Z" fill="#e6e6e6"/><path d="M6.9 8.5L11.2 3.8L15.5 8.5L11.2 13.2Z" fill="#e6e6e6"/></svg><svg class="a" style="left:838.25px;top:949px;" width="16" height="16" viewBox="0 0 16 16"><rect x="12.4" y="3" width="2.2" height="11" fill="#e6e6e6"/><path d="M4.5 3.3V13.7L10.9 8.5Z" fill="#e6e6e6" stroke="#e6e6e6" stroke-width="0.6" stroke-linejoin="round"/></svg><div class="a" style="left:1291px;top:948px;width:73px;height:18.5px;background:#545454;border-radius:4px;"></div><div class="a t" style="left:1291px;top:951.84px;font-size:12px;line-height:12px;color:#e6e6e6;width:73px;text-align:center;">1</div><div class="a" style="left:1371px;top:948px;width:192px;height:18.5px;background:#545454;border-radius:4px;"></div><div class="a" style="left:1371px;top:948px;width:18.5px;height:18.5px;background:#4a4a4a;border-radius:4px 0 0 4px;"></div><div class="a" style="left:1389.5px;top:948px;width:1px;height:18.5px;background:#3e3e3e;"></div><div class="a" style="left:1476.5px;top:948px;width:1px;height:18.5px;background:#3e3e3e;"></div><svg class="a" style="left:1373px;top:949px;" width="16" height="16" viewBox="0 0 16 16"><circle cx="7.5" cy="9" r="5.3" fill="none" stroke="#e6e6e6" stroke-width="1.1"/><path d="M7.5 6V9.5H10M5.5 2H9.5M7.5 2V3.5M12 4L13.5 2.5" fill="none" stroke="#e6e6e6" stroke-width="1.1"/></svg><div class="a t" style="left:1405px;top:951.84px;font-size:12px;line-height:12px;color:#e6e6e6;"><span style="letter-spacing:-1.00px">起始</span></div><div class="a t" style="left:1400px;top:951.84px;font-size:12px;line-height:12px;color:#e6e6e6;width:63px;text-align:right;">1</div><div class="a t" style="left:1492px;top:951.84px;font-size:12px;line-height:12px;color:#e6e6e6;"><span style="letter-spacing:-1.00px">结束</span></div><div class="a t" style="left:1490px;top:951.84px;font-size:12px;line-height:12px;color:#e6e6e6;width:60px;text-align:right;">250</div><div class="a" style="left:1px;top:969px;width:1568px;height:23px;background:#1d1d1d;"></div><div class="a" style="left:1510.99px;top:992px;width:58.0083px;height:24px;background:#222222;"></div><svg class="a" style="left:0;top:0" width="1" height="1"><rect x="23.0" y="992" width="1" height="24" fill="#232323"/><rect x="52.2" y="992" width="1" height="24" fill="#181818"/><rect x="81.3" y="992" width="1" height="24" fill="#232323"/><rect x="110.5" y="992" width="1" height="24" fill="#181818"/><rect x="139.7" y="992" width="1" height="24" fill="#232323"/><rect x="168.8" y="992" width="1" height="24" fill="#181818"/><rect x="198.0" y="992" width="1" height="24" fill="#232323"/><rect x="227.2" y="992" width="1" height="24" fill="#181818"/><rect x="256.3" y="992" width="1" height="24" fill="#232323"/><rect x="285.5" y="992" width="1" height="24" fill="#181818"/><rect x="314.7" y="992" width="1" height="24" fill="#232323"/><rect x="343.8" y="992" width="1" height="24" fill="#181818"/><rect x="373.0" y="992" width="1" height="24" fill="#232323"/><rect x="402.2" y="992" width="1" height="24" fill="#181818"/><rect x="431.3" y="992" width="1" height="24" fill="#232323"/><rect x="460.5" y="992" width="1" height="24" fill="#181818"/><rect x="489.7" y="992" width="1" height="24" fill="#232323"/><rect x="518.8" y="992" width="1" height="24" fill="#181818"/><rect x="548.0" y="992" width="1" height="24" fill="#232323"/><rect x="577.2" y="992" width="1" height="24" fill="#181818"/><rect x="606.3" y="992" width="1" height="24" fill="#232323"/><rect x="635.5" y="992" width="1" height="24" fill="#181818"/><rect x="664.7" y="992" width="1" height="24" fill="#232323"/><rect x="693.8" y="992" width="1" height="24" fill="#181818"/><rect x="723.0" y="992" width="1" height="24" fill="#232323"/><rect x="752.2" y="992" width="1" height="24" fill="#181818"/><rect x="781.3" y="992" width="1" height="24" fill="#232323"/><rect x="810.5" y="992" width="1" height="24" fill="#181818"/><rect x="839.7" y="992" width="1" height="24" fill="#232323"/><rect x="868.8" y="992" width="1" height="24" fill="#181818"/><rect x="898.0" y="992" width="1" height="24" fill="#232323"/><rect x="927.2" y="992" width="1" height="24" fill="#181818"/><rect x="956.3" y="992" width="1" height="24" fill="#232323"/><rect x="985.5" y="992" width="1" height="24" fill="#181818"/><rect x="1014.7" y="992" width="1" height="24" fill="#232323"/><rect x="1043.8" y="992" width="1" height="24" fill="#181818"/><rect x="1073.0" y="992" width="1" height="24" fill="#232323"/><rect x="1102.2" y="992" width="1" height="24" fill="#181818"/><rect x="1131.3" y="992" width="1" height="24" fill="#232323"/><rect x="1160.5" y="992" width="1" height="24" fill="#181818"/><rect x="1189.7" y="992" width="1" height="24" fill="#232323"/><rect x="1218.8" y="992" width="1" height="24" fill="#181818"/><rect x="1248.0" y="992" width="1" height="24" fill="#232323"/><rect x="1277.2" y="992" width="1" height="24" fill="#181818"/><rect x="1306.3" y="992" width="1" height="24" fill="#232323"/><rect x="1335.5" y="992" width="1" height="24" fill="#181818"/><rect x="1364.7" y="992" width="1" height="24" fill="#232323"/><rect x="1393.8" y="992" width="1" height="24" fill="#181818"/><rect x="1423.0" y="992" width="1" height="24" fill="#232323"/><rect x="1452.2" y="992" width="1" height="24" fill="#181818"/><rect x="1481.3" y="992" width="1" height="24" fill="#232323"/><rect x="1510.5" y="992" width="1" height="24" fill="#181818"/><rect x="1539.7" y="992" width="1" height="24" fill="#232323"/></svg><div class="a t" style="left:90.9997px;top:975.34px;font-size:12px;line-height:12px;color:#d8d8d8;width:40px;text-align:center;">10</div><div class="a t" style="left:149.333px;top:975.34px;font-size:12px;line-height:12px;color:#d8d8d8;width:40px;text-align:center;">20</div><div class="a t" style="left:207.666px;top:975.34px;font-size:12px;line-height:12px;color:#d8d8d8;width:40px;text-align:center;">30</div><div class="a t" style="left:265.999px;top:975.34px;font-size:12px;line-height:12px;color:#d8d8d8;width:40px;text-align:center;">40</div><div class="a t" style="left:324.332px;top:975.34px;font-size:12px;line-height:12px;color:#d8d8d8;width:40px;text-align:center;">50</div><div class="a t" style="left:382.665px;top:975.34px;font-size:12px;line-height:12px;color:#d8d8d8;width:40px;text-align:center;">60</div><div class="a t" style="left:440.998px;top:975.34px;font-size:12px;line-height:12px;color:#d8d8d8;width:40px;text-align:center;">70</div><div class="a t" style="left:499.331px;top:975.34px;font-size:12px;line-height:12px;color:#d8d8d8;width:40px;text-align:center;">80</div><div class="a t" style="left:557.664px;top:975.34px;font-size:12px;line-height:12px;color:#d8d8d8;width:40px;text-align:center;">90</div><div class="a t" style="left:615.997px;top:975.34px;font-size:12px;line-height:12px;color:#d8d8d8;width:40px;text-align:center;">100</div><div class="a t" style="left:674.33px;top:975.34px;font-size:12px;line-height:12px;color:#d8d8d8;width:40px;text-align:center;">110</div><div class="a t" style="left:732.663px;top:975.34px;font-size:12px;line-height:12px;color:#d8d8d8;width:40px;text-align:center;">120</div><div class="a t" style="left:790.996px;top:975.34px;font-size:12px;line-height:12px;color:#d8d8d8;width:40px;text-align:center;">130</div><div class="a t" style="left:849.329px;top:975.34px;font-size:12px;line-height:12px;color:#d8d8d8;width:40px;text-align:center;">140</div><div class="a t" style="left:907.662px;top:975.34px;font-size:12px;line-height:12px;color:#d8d8d8;width:40px;text-align:center;">150</div><div class="a t" style="left:965.995px;top:975.34px;font-size:12px;line-height:12px;color:#d8d8d8;width:40px;text-align:center;">160</div><div class="a t" style="left:1024.33px;top:975.34px;font-size:12px;line-height:12px;color:#d8d8d8;width:40px;text-align:center;">170</div><div class="a t" style="left:1082.66px;top:975.34px;font-size:12px;line-height:12px;color:#d8d8d8;width:40px;text-align:center;">180</div><div class="a t" style="left:1140.99px;top:975.34px;font-size:12px;line-height:12px;color:#d8d8d8;width:40px;text-align:center;">190</div><div class="a t" style="left:1199.33px;top:975.34px;font-size:12px;line-height:12px;color:#d8d8d8;width:40px;text-align:center;">200</div><div class="a t" style="left:1257.66px;top:975.34px;font-size:12px;line-height:12px;color:#d8d8d8;width:40px;text-align:center;">210</div><div class="a t" style="left:1315.99px;top:975.34px;font-size:12px;line-height:12px;color:#d8d8d8;width:40px;text-align:center;">220</div><div class="a t" style="left:1374.33px;top:975.34px;font-size:12px;line-height:12px;color:#d8d8d8;width:40px;text-align:center;">230</div><div class="a t" style="left:1432.66px;top:975.34px;font-size:12px;line-height:12px;color:#d8d8d8;width:40px;text-align:center;">240</div><div class="a t" style="left:1490.99px;top:975.34px;font-size:12px;line-height:12px;color:#d8d8d8;width:40px;text-align:center;">250</div><div class="a" style="left:1510.49px;top:992px;width:1.2px;height:24px;background:#0c0c0c;"></div><div class="a" style="left:9.5px;top:1005.5px;width:1551px;height:8.5px;background:#4a4a4a;border-radius:4px;"></div><div class="a" style="left:10.5px;top:1006.5px;width:6.5px;height:6.5px;background:#2f2f2f;border-radius:4px;"></div><div class="a" style="left:1552.5px;top:1006.5px;width:6.5px;height:6.5px;background:#2f2f2f;border-radius:4px;"></div><div class="a" style="left:57.75px;top:989px;width:1.5px;height:27px;background:#4772b3;"></div><div class="a" style="left:46.7px;top:972.3px;width:23.6px;height:16.7px;background:#4772b3;border-radius:4px;"></div><div class="a t" style="left:46.7px;top:974.84px;font-size:12px;line-height:12px;color:#ffffff;width:23.6px;text-align:center;">1</div><svg class="a" style="left:2px;top:986px;" width="8" height="10" viewBox="0 0 8 10"><path d="M1 1L5 5L1 9" fill="none" stroke="#aaa" stroke-width="1"/></svg><svg class="a" style="left:1563px;top:985px;" width="8" height="10" viewBox="0 0 8 10"><path d="M6 1L2 5L6 9" fill="none" stroke="#aaa" stroke-width="1"/></svg><svg class="a" style="left:9px;top:1019px;" width="14" height="17" viewBox="0 0 14 17"><rect x="1.5" y="1.5" width="10" height="14" rx="2.5" fill="none" stroke="#c8c8c8" stroke-width="1.1"/><rect x="5" y="3" width="3" height="5" fill="#c8c8c8"/></svg><div class="a t" style="left:26.5px;top:1021.34px;font-size:12px;line-height:12px;color:#c8c8c8;"><span style="letter-spacing:-1.00px">平移视图</span></div><svg class="a" style="left:1836px;top:1020px;" width="16" height="16" viewBox="0 0 16 16"><circle cx="8" cy="8" r="6" fill="none" stroke="#9a9a9a" stroke-width="1"/><path d="M2 8H14M8 2V14M4 4L12 12" fill="none" stroke="#9a9a9a" stroke-width="1"/></svg><div class="a" style="left:1860px;top:1021px;width:1px;height:14px;background:#9a9a9a;"></div><div class="a t" style="left:1864px;top:1021.84px;font-size:12px;line-height:12px;color:#9a9a9a;">4.3.2</div><div class="a" style="left:1px;top:27px;width:1568px;height:914px;border-radius:6px;border:1px solid rgba(255,255,255,0.075);pointer-events:none;"></div><div class="a" style="left:1573px;top:27px;width:327px;height:315px;border-radius:6px;border:1px solid rgba(255,255,255,0.075);pointer-events:none;"></div><div class="a" style="left:1573px;top:345px;width:327px;height:671px;border-radius:6px;border:1px solid rgba(255,255,255,0.075);pointer-events:none;"></div><div class="a" style="left:1px;top:944px;width:1568px;height:72px;border-radius:6px;border:1px solid rgba(255,255,255,0.075);pointer-events:none;"></div><div class="a" style="left:309px;top:298px;width:540px;height:606.5px;background:#ffffff;border-radius:7px;box-shadow:0 1px 22px rgba(0,0,0,0.3);overflow:hidden;"></div><div class="a" style="left:309px;top:298px;width:540px;height:41px;background:#f8f8f8;border-radius:7px 7px 0 0;"></div><div class="a" style="left:311.5px;top:307px;width:185px;height:27.2px;background:#e9ebf8;border-radius:6px;"></div><div class="a t" style="left:331px;top:312.65px;width:150px;overflow:hidden;font-size:14px;line-height:16px;color:#bcbcc2;-webkit-mask-image:linear-gradient(90deg,#000 80%,transparent 100%)">通过MCP使用blender教</div><svg class="a" style="left:521px;top:315px;" width="14" height="14" viewBox="0 0 14 14"><path d="M7 0.5V13.5M0.5 7H13.5" stroke="#9a9a9a" stroke-width="1.3"/></svg><svg class="a" style="left:651px;top:316px;" width="16" height="11" viewBox="0 0 16 11"><path d="M1.5 2L8 8.5L14.5 2" fill="none" stroke="#b4b4b4" stroke-width="1.4"/></svg><svg class="a" style="left:711px;top:310px;" width="12" height="15" viewBox="0 0 12 15"><path d="M3 1.5H9M4 1.5V7.5L2.5 9H9.5L8 7.5V1.5M6 9V14.5" fill="none" stroke="#555" stroke-width="1.2"/></svg><div class="a" style="left:748.7px;top:318.2px;width:14px;height:1.3px;background:#444;"></div><div class="a" style="left:786px;top:313px;width:11px;height:11px;border:1.2px solid #555;"></div><svg class="a" style="left:823px;top:312px;" width="13" height="13" viewBox="0 0 13 13"><path d="M1 1L12 12M12 1L1 12" stroke="#444" stroke-width="1.3"/></svg><div class="a" style="left:727px;top:347px;width:14px;height:14px;background:#60646a;border-radius:2.5px;"></div><div class="a t" style="left:727px;top:349.19px;font-size:11px;line-height:11px;color:#ffffff;width:14px;text-align:center;font-weight:bold;">Q</div><svg class="a" style="left:760px;top:346px;" width="14" height="16" viewBox="0 0 14 16"><path d="M8 7V4.5A2.5 2.5 0 0 1 13 4.5" fill="none" stroke="#5f6368" stroke-width="1.3"/><rect x="1.5" y="7.5" width="9.5" height="7" rx="1" fill="none" stroke="#5f6368" stroke-width="1.4"/><rect x="5.3" y="10" width="2" height="2" fill="#5f6368"/></svg><svg class="a" style="left:791px;top:346px;" width="14" height="16" viewBox="0 0 14 16"><path d="M1.5 2.5A1 1 0 0 1 2.5 1.5H8L12.5 6V14A1 1 0 0 1 11.5 15H2.5A1 1 0 0 1 1.5 14Z" fill="none" stroke="#5f6368" stroke-width="1.3"/><path d="M8 1.5V6H12.5" fill="none" stroke="#5f6368" stroke-width="1.2"/></svg><svg class="a" style="left:828px;top:349px;" width="4" height="11" viewBox="0 0 4 11"><circle cx="2" cy="1.5" r="1.2" fill="#444"/><circle cx="2" cy="5.5" r="1.2" fill="#444"/><circle cx="2" cy="9.5" r="1.2" fill="#444"/></svg><div class="a" style="left:332px;top:375px;width:484px;height:382px;background:#2e2e2e;"></div><div class="a" style="left:338.7px;top:381.6px;width:104px;height:93.7px;background:#545454;border-radius:3px;"></div><div class="a t" style="left:344px;top:386.92px;font-size:8.6px;line-height:8.6px;color:#e6e6e6;"><span style="letter-spacing:-0.72px">界面</span></div><div class="a" style="left:338.7px;top:400px;width:104px;height:1px;background:#474747;"></div><div class="a t" style="left:344px;top:405.82px;font-size:8.6px;line-height:8.6px;color:#e6e6e6;"><span style="letter-spacing:-0.72px">视图</span></div><div class="a" style="left:338.7px;top:418.8px;width:104px;height:1px;background:#474747;"></div><div class="a t" style="left:344px;top:424.62px;font-size:8.6px;line-height:8.6px;color:#e6e6e6;"><span style="letter-spacing:-0.72px">灯光</span></div><div class="a" style="left:338.7px;top:437.5px;width:104px;height:1px;background:#474747;"></div><div class="a t" style="left:344px;top:443.32px;font-size:8.6px;line-height:8.6px;color:#e6e6e6;"><span style="letter-spacing:-0.72px">编辑</span></div><div class="a" style="left:338.7px;top:456.2px;width:104px;height:1px;background:#474747;"></div><div class="a t" style="left:344px;top:462.02px;font-size:8.6px;line-height:8.6px;color:#e6e6e6;"><span style="letter-spacing:-0.72px">动画</span></div><div class="a" style="left:338.7px;top:482.4px;width:104px;height:18.6px;background:#545454;border-radius:3px;"></div><div class="a t" style="left:344px;top:487.72px;font-size:8.6px;line-height:8.6px;color:#e6e6e6;"><span style="letter-spacing:-0.72px">获取扩展</span></div><div class="a" style="left:338.7px;top:506.3px;width:104px;height:36.9px;background:#545454;border-radius:3px;"></div><div class="a" style="left:338.7px;top:506.3px;width:104px;height:18.3px;background:#4772b3;border-radius:3px 3px 0 0;"></div><div class="a t" style="left:344px;top:511.62px;font-size:8.6px;line-height:8.6px;color:#e6e6e6;"><span style="letter-spacing:-0.72px">插件</span></div><div class="a" style="left:338.7px;top:524.1px;width:104px;height:1px;background:#474747;"></div><div class="a t" style="left:344px;top:529.92px;font-size:8.6px;line-height:8.6px;color:#e6e6e6;"><span style="letter-spacing:-0.72px">主题</span></div><div class="a" style="left:338.7px;top:549.5px;width:104px;height:55.9px;background:#545454;border-radius:3px;"></div><div class="a t" style="left:344px;top:554.82px;font-size:8.6px;line-height:8.6px;color:#e6e6e6;"><span style="letter-spacing:-0.72px">输入</span></div><div class="a" style="left:338.7px;top:567.7px;width:104px;height:1px;background:#474747;"></div><div class="a t" style="left:344px;top:573.52px;font-size:8.6px;line-height:8.6px;color:#e6e6e6;"><span style="letter-spacing:-0.72px">视图切换</span></div><div class="a" style="left:338.7px;top:586.3px;width:104px;height:1px;background:#474747;"></div><div class="a t" style="left:344px;top:592.12px;font-size:8.6px;line-height:8.6px;color:#e6e6e6;"><span style="letter-spacing:-0.72px">键位映射</span></div><div class="a" style="left:338.7px;top:612.2px;width:104px;height:55.9px;background:#545454;border-radius:3px;"></div><div class="a t" style="left:344px;top:617.52px;font-size:8.6px;line-height:8.6px;color:#e6e6e6;"><span style="letter-spacing:-0.72px">系统</span></div><div class="a" style="left:338.7px;top:630.3px;width:104px;height:1px;background:#474747;"></div><div class="a t" style="left:344px;top:636.12px;font-size:8.6px;line-height:8.6px;color:#e6e6e6;"><span style="letter-spacing:-0.72px">保存</span>&<span style="letter-spacing:-0.72px">加载</span></div><div class="a" style="left:338.7px;top:649px;width:104px;height:1px;background:#474747;"></div><div class="a t" style="left:344px;top:654.82px;font-size:8.6px;line-height:8.6px;color:#e6e6e6;"><span style="letter-spacing:-0.72px">文件路径</span></div><div class="a" style="left:456px;top:381.8px;width:172.7px;height:13px;background:#1d1d1d;border-radius:3px;"></div><svg class="a" style="left:459px;top:382.5px;" width="11" height="11" viewBox="0 0 11 11"><circle cx="6.5" cy="4.5" r="3" fill="none" stroke="#d0d0d0" stroke-width="1"/><path d="M4.3 6.7L1.5 9.5" stroke="#d0d0d0" stroke-width="1"/></svg><div class="a t" style="left:474.5px;top:384.02px;font-size:8.6px;line-height:8.6px;color:#e6e6e6;">Blender MCP</div><svg class="a" style="left:616px;top:384px;" width="8" height="8" viewBox="0 0 8 8"><path d="M1 1L7 7M7 1L1 7" stroke="#d0d0d0" stroke-width="0.9"/></svg><div class="a" style="left:636.2px;top:384px;width:9px;height:9px;background:#545454;border-radius:2px;"></div><div class="a t" style="left:648px;top:384.02px;font-size:8.6px;line-height:8.6px;color:#e6e6e6;"><span style="letter-spacing:-0.72px">仅已启用的</span></div><svg class="a" style="left:777px;top:382px;" width="12" height="12" viewBox="0 0 12 12"><path d="M1.5 1.5H6.5L11 6L6 11L1.5 6.5Z" fill="none" stroke="#d0d0d0" stroke-width="1"/><circle cx="4" cy="4" r="1" fill="#d0d0d0"/></svg><div class="a" style="left:796.7px;top:381.8px;width:12px;height:13px;background:#282828;border-radius:3px;"></div><svg class="a" style="left:799.2px;top:384.5px;" width="7" height="7" viewBox="0 0 7 7"><path d="M1 2.5L3.5 4.5L6 2.5" fill="none" stroke="#d0d0d0" stroke-width="1"/></svg><div class="a" style="left:455.8px;top:403.5px;width:352.8px;height:120px;background:#232323;border-radius:4px;border:1px solid #343434;"></div><svg class="a" style="left:462.5px;top:409.7px;" width="8" height="8" viewBox="0 0 8 8"><path d="M1 2.8L4.0 5.199999999999999L7 2.8" fill="none" stroke="#cfcfcf" stroke-width="1"/></svg><div class="a" style="left:476.8px;top:410px;width:8.2px;height:8px;background:#e6e6e6;border-radius:1.5px;"></div><svg class="a" style="left:476.8px;top:410px;" width="8.2" height="8" viewBox="0 0 8.2 8"><path d="M1.8 4L3.5 5.7L6.6 2.3" fill="none" stroke="#222" stroke-width="1.2"/></svg><div class="a t" style="left:491.5px;top:409.72px;font-size:8.6px;line-height:8.6px;color:#e6e6e6;">Blender MCP</div><svg class="a" style="left:793px;top:408px;" width="12" height="10" viewBox="0 0 12 10"><path d="M1 2H5L6 3H11V9H1Z" fill="#e0e0e0"/><path d="M1 4H11" stroke="#232323" stroke-width="0.8"/></svg><div class="a t" style="left:461.6px;top:430.32px;font-size:8.6px;line-height:8.6px;color:#e0e0e0;">Connect Blender to Claude via MCP.</div><div class="a" style="left:769px;top:427.8px;width:36.7px;height:13.5px;background:#3d3d3d;border-radius:3px;"></div><div class="a t" style="left:769px;top:430.32px;font-size:8.6px;line-height:8.6px;color:#e0e0e0;width:36.7px;text-align:center;"><span style="letter-spacing:-0.72px">卸载</span></div><div class="a" style="left:459.2px;top:449px;width:346.8px;height:1px;background:#353535;"></div><div class="a t" style="left:449px;top:461.12px;font-size:8.6px;line-height:8.6px;color:#cfcfcf;width:60px;text-align:right;"><span style="letter-spacing:-0.72px">类型</span></div><div class="a t" style="left:516.1px;top:461.12px;font-size:8.6px;line-height:8.6px;color:#dcdcdc;">Legacy (User)</div><div class="a t" style="left:449px;top:477.22px;font-size:8.6px;line-height:8.6px;color:#cfcfcf;width:60px;text-align:right;"><span style="letter-spacing:-0.72px">维护者</span></div><div class="a t" style="left:516.1px;top:477.22px;font-size:8.6px;line-height:8.6px;color:#dcdcdc;">BlenderMCP</div><div class="a t" style="left:449px;top:493.32px;font-size:8.6px;line-height:8.6px;color:#cfcfcf;width:60px;text-align:right;"><span style="letter-spacing:-0.72px">版本</span></div><div class="a t" style="left:516.1px;top:493.32px;font-size:8.6px;line-height:8.6px;color:#dcdcdc;">0.2</div><div class="a t" style="left:449px;top:509.42px;font-size:8.6px;line-height:8.6px;color:#cfcfcf;width:60px;text-align:right;"><span style="letter-spacing:-0.72px">文件</span></div><div class="a t" style="left:516.1px;top:509.42px;font-size:8.6px;line-height:8.6px;color:#dcdcdc;letter-spacing:0.14px;">C:\Users\dell\AppData\Roaming\Ble...lender\4.3\scripts\addons\addon.py</div><svg class="a" style="left:340px;top:738px;" width="11" height="10" viewBox="0 0 11 10"><path d="M1 1.5H10M1 5H10M1 8.5H10" stroke="#bdbdbd" stroke-width="1"/></svg><svg class="a" style="left:795px;top:751px;" width="8" height="5" viewBox="0 0 8 5"><path d="M1 4L4 1L7 4" fill="none" stroke="#555" stroke-width="0.9"/></svg><div class="a" style="left:843.9px;top:775px;width:2px;height:48px;background:#c4c4c4;border-radius:1px;"></div><div class="a" style="left:312.3px;top:861.8px;width:235.7px;height:2px;background:#c4c4c4;border-radius:1px;"></div><div class="a" style="left:309px;top:868px;width:540px;height:36.5px;background:#f5f5f5;border-radius:0 0 7px 7px;"></div><div class="a" style="left:309px;top:874px;width:540px;height:1px;background:#e2e2e2;"></div><div class="a t" style="left:600px;top:884.00px;font-size:13px;line-height:13px;color:#3c3c3c;letter-spacing:-0.3px;">字符 628  字 240  链接 2  图片 6  块 35</div><svg class="a" style="left:823px;top:882px;" width="17" height="17" viewBox="0 0 17 17"><circle cx="8.5" cy="8.5" r="6.8" fill="none" stroke="#555" stroke-width="1.2"/><path d="M6.3 6.7A2.2 2.2 0 1 1 8.5 9V10.3" fill="none" stroke="#555" stroke-width="1.2"/><circle cx="8.5" cy="12.3" r="0.8" fill="#555"/></svg><div class="a" style="left:1523px;top:189px;width:67px;height:100px;border:2px solid #e8202a;"></div></body></html>
